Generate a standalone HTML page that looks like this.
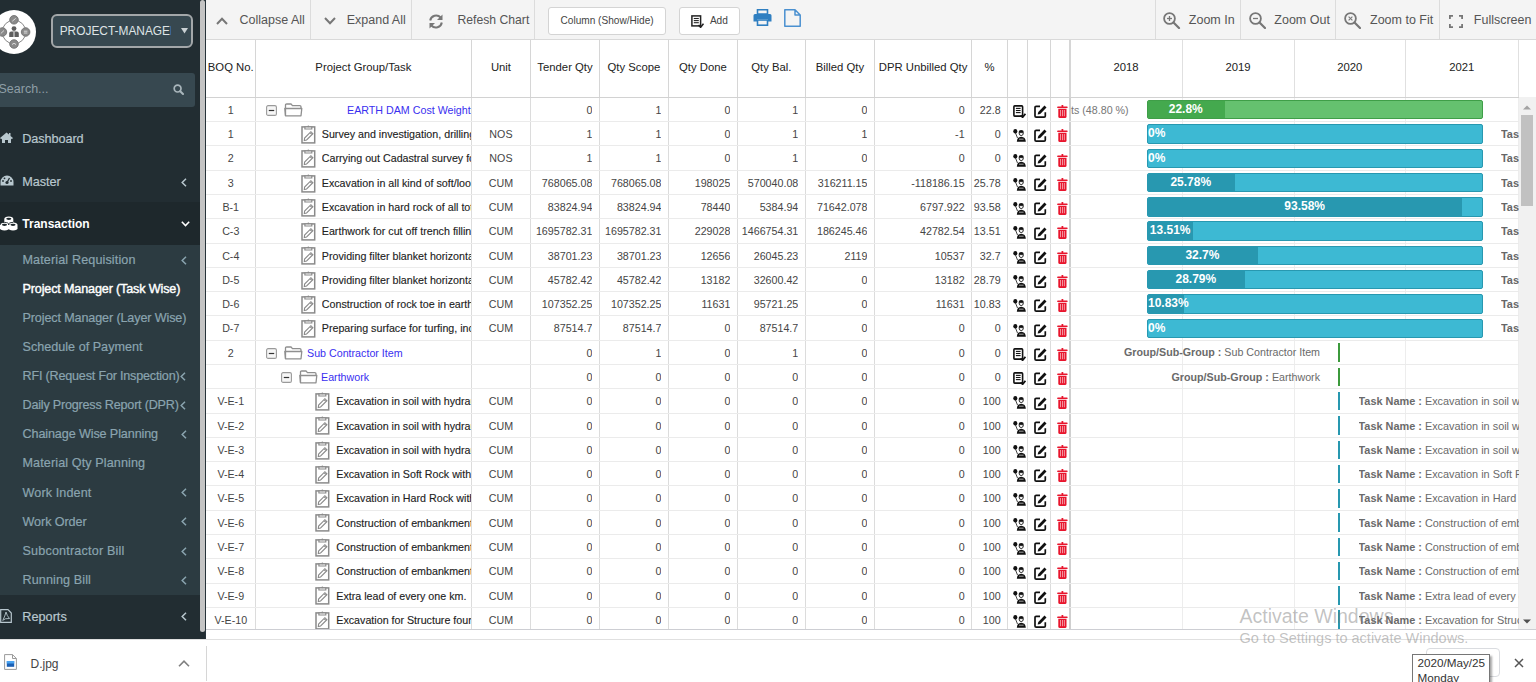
<!DOCTYPE html>
<html><head><meta charset="utf-8"><title>Project Manager</title>
<style>
html,body{margin:0;padding:0;width:1536px;height:682px;overflow:hidden;background:#fff;position:relative;font-family:'Liberation Sans',sans-serif;}
</style></head><body>
<div style="position:absolute;left:0px;top:0px;width:206px;height:639px;background:#222d32;overflow:hidden;"></div><svg style="position:absolute;left:-8px;top:9.7px" width="44" height="44" viewBox="0 0 44 44">
<circle cx="22" cy="22" r="22" fill="#fff"/>
<circle cx="22" cy="22" r="11.8" fill="none" stroke="#7a7a7a" stroke-width="0.9"/>
<g fill="#8a8a8a" stroke="#6a6a6a" stroke-width="0.8">
<circle cx="22" cy="9.8" r="4.3"/><circle cx="22" cy="34" r="4.3"/><circle cx="10.4" cy="22" r="4.3"/><circle cx="33.6" cy="22" r="4.3"/></g>
<g stroke="#f0f0f0" stroke-width="0.8" fill="none">
<path d="M20.3 11.2 L23.7 8.4"/><path d="M8.8 23.5 L12 20.5"/><path d="M31.8 21.2 H35.4 M31.8 23 H35.4"/><path d="M20 34.5 Q22 32 24 34.5"/></g>
<circle cx="22" cy="18.6" r="2.4" fill="#5e5e5e"/>
<path d="M17.2 27 V23.6 Q17.2 21.6 19.2 21.6 H24.8 Q26.8 21.6 26.8 23.6 V27 Z" fill="#5e5e5e"/>
<line x1="22" y1="21.8" x2="22" y2="27" stroke="#fff" stroke-width="0.9"/>
</svg><div style="position:absolute;left:50.5px;top:13.9px;width:142.5px;height:34px;box-sizing:border-box;border:2px solid #a3a7a9;border-radius:6px;background:#374850;overflow:hidden;"><div style="position:absolute;left:7.2px;top:8.0px;white-space:pre;font-family:'Liberation Sans',sans-serif;font-size:11.9px;color:#dfe4e6;width:111.5px;overflow:hidden;">PROJECT-MANAGEMENT</div></div><svg style="position:absolute;left:180.5px;top:28px" width="7" height="6"><path d="M0 0 L7 0 L3.5 5.5 Z" fill="#c9d0d3"/></svg><div style="position:absolute;left:0px;top:72.5px;width:195px;height:34.5px;background:#374850;border-radius:0 3px 3px 0;"><div style="position:absolute;left:-1.5px;top:9.5px;white-space:pre;font-family:'Liberation Sans',sans-serif;font-size:12.5px;color:#8e9ea6;">Search...</div></div><svg style="position:absolute;left:173px;top:84px" width="11" height="11" viewBox="0 0 11 11">
<circle cx="4.6" cy="4.6" r="3.4" fill="none" stroke="#a9b6bc" stroke-width="1.7"/>
<line x1="7.2" y1="7.2" x2="10" y2="10" stroke="#a9b6bc" stroke-width="2" stroke-linecap="round"/></svg><svg style="position:absolute;left:0px;top:132px" width="13" height="11" viewBox="0 0 13 11">
<path d="M6.5 0.5 L0 6 L1.2 7.2 L2 6.5 V11 H5 V8 H8 V11 H11 V6.5 L11.8 7.2 L13 6 L10.5 3.9 V1 H9 V2.6 Z" fill="#b8c7ce"/></svg><div style="position:absolute;left:22.3px;top:131.8px;white-space:pre;font-family:'Liberation Sans',sans-serif;font-size:12.7px;color:#b8c7ce;-webkit-text-stroke:0.2px #b8c7ce;letter-spacing:-0.09px;">Dashboard</div><svg style="position:absolute;left:0px;top:175px" width="14" height="11" viewBox="0 0 14 11">
<path d="M7 0.5 A6.5 6.5 0 0 0 0.5 7 V10.5 H13.5 V7 A6.5 6.5 0 0 0 7 0.5 Z" fill="#b8c7ce"/>
<circle cx="7" cy="7.5" r="1.6" fill="#222d32"/><line x1="7" y1="7.5" x2="9.5" y2="3" stroke="#222d32" stroke-width="1.3"/>
<circle cx="3" cy="6" r="0.9" fill="#222d32"/><circle cx="4.5" cy="3.3" r="0.9" fill="#222d32"/><circle cx="11" cy="6" r="0.9" fill="#222d32"/></svg><div style="position:absolute;left:22.3px;top:174.5px;white-space:pre;font-family:'Liberation Sans',sans-serif;font-size:12.7px;color:#b8c7ce;-webkit-text-stroke:0.2px #b8c7ce;letter-spacing:-0.07px;">Master</div><svg style="position:absolute;left:181px;top:177.5px" width="6" height="9" viewBox="0 0 6 9"><path d="M5 0.8 L1.2 4.5 L5 8.2" fill="none" stroke="#b8c7ce" stroke-width="1.5"/></svg><div style="position:absolute;left:0px;top:202px;width:200px;height:43px;background:#1e282c;"></div><svg style="position:absolute;left:0px;top:216px" width="18" height="15" viewBox="0 0 18 15">
<g fill="#fff">
<path d="M4.3 3 Q4.3 0.4 8.8 0.4 Q13.3 0.4 13.3 3 V6.5 Q13.3 8.6 8.8 8.6 Q4.3 8.6 4.3 6.5 Z"/>
<path d="M0 9 Q0 6.4 4.5 6.4 Q9 6.4 9 9 V12.3 Q9 14.4 4.5 14.4 Q0 14.4 0 12.3 Z"/>
<path d="M8.5 9 Q8.5 6.4 13 6.4 Q17.5 6.4 17.5 9 V12.3 Q17.5 14.4 13 14.4 Q8.5 14.4 8.5 12.3 Z"/></g>
<g fill="#1e282c"><ellipse cx="8.8" cy="2.8" rx="2.6" ry="1.1"/><ellipse cx="4.5" cy="8.8" rx="2.6" ry="1.1"/><ellipse cx="13" cy="8.8" rx="2.6" ry="1.1"/></g>
<g stroke="#1e282c" stroke-width="0.9" fill="none"><path d="M0 9 Q0 6.4 4.5 6.4 Q9 6.4 9 9"/><path d="M8.5 9 Q8.5 6.4 13 6.4"/></g>
</svg><div style="position:absolute;left:22.3px;top:216.8px;white-space:pre;font-family:'Liberation Sans',sans-serif;font-size:12px;color:#fff;font-weight:bold;">Transaction</div><svg style="position:absolute;left:180.5px;top:220.5px" width="9" height="6" viewBox="0 0 9 6"><path d="M0.8 0.8 L4.5 4.6 L8.2 0.8" fill="none" stroke="#fff" stroke-width="1.5"/></svg><div style="position:absolute;left:0px;top:245px;width:200px;height:349.5px;background:#2c3b41;"></div><div style="position:absolute;left:22.5px;top:252.7px;white-space:pre;font-family:'Liberation Sans',sans-serif;font-size:12.6px;color:#8aa4af;-webkit-text-stroke:0.2px #8aa4af;letter-spacing:0.125px;">Material Requisition</div><svg style="position:absolute;left:180.5px;top:255.5px" width="6" height="9" viewBox="0 0 6 9"><path d="M5 0.8 L1.2 4.5 L5 8.2" fill="none" stroke="#8aa4af" stroke-width="1.5"/></svg><div style="position:absolute;left:22.5px;top:281.8px;white-space:pre;font-family:'Liberation Sans',sans-serif;font-size:12.6px;color:#fff;-webkit-text-stroke:0.4px #fff;letter-spacing:-0.147px;">Project Manager (Task Wise)</div><div style="position:absolute;left:22.5px;top:310.9px;white-space:pre;font-family:'Liberation Sans',sans-serif;font-size:12.6px;color:#8aa4af;-webkit-text-stroke:0.2px #8aa4af;letter-spacing:-0.124px;">Project Manager (Layer Wise)</div><div style="position:absolute;left:22.5px;top:340.0px;white-space:pre;font-family:'Liberation Sans',sans-serif;font-size:12.6px;color:#8aa4af;-webkit-text-stroke:0.2px #8aa4af;letter-spacing:0.015px;">Schedule of Payment</div><div style="position:absolute;left:22.5px;top:369.09999999999997px;white-space:pre;font-family:'Liberation Sans',sans-serif;font-size:12.6px;color:#8aa4af;-webkit-text-stroke:0.2px #8aa4af;letter-spacing:-0.193px;">RFI (Request For Inspection)</div><svg style="position:absolute;left:179.5px;top:371.9px" width="6" height="9" viewBox="0 0 6 9"><path d="M5 0.8 L1.2 4.5 L5 8.2" fill="none" stroke="#8aa4af" stroke-width="1.5"/></svg><div style="position:absolute;left:22.5px;top:398.2px;white-space:pre;font-family:'Liberation Sans',sans-serif;font-size:12.6px;color:#8aa4af;-webkit-text-stroke:0.2px #8aa4af;letter-spacing:-0.203px;">Daily Progress Report (DPR)</div><svg style="position:absolute;left:179.5px;top:401.0px" width="6" height="9" viewBox="0 0 6 9"><path d="M5 0.8 L1.2 4.5 L5 8.2" fill="none" stroke="#8aa4af" stroke-width="1.5"/></svg><div style="position:absolute;left:22.5px;top:427.3px;white-space:pre;font-family:'Liberation Sans',sans-serif;font-size:12.6px;color:#8aa4af;-webkit-text-stroke:0.2px #8aa4af;letter-spacing:-0.110px;">Chainage Wise Planning</div><svg style="position:absolute;left:180.5px;top:430.1px" width="6" height="9" viewBox="0 0 6 9"><path d="M5 0.8 L1.2 4.5 L5 8.2" fill="none" stroke="#8aa4af" stroke-width="1.5"/></svg><div style="position:absolute;left:22.5px;top:456.40000000000003px;white-space:pre;font-family:'Liberation Sans',sans-serif;font-size:12.6px;color:#8aa4af;-webkit-text-stroke:0.2px #8aa4af;letter-spacing:0.109px;">Material Qty Planning</div><div style="position:absolute;left:22.5px;top:485.5px;white-space:pre;font-family:'Liberation Sans',sans-serif;font-size:12.6px;color:#8aa4af;-webkit-text-stroke:0.2px #8aa4af;letter-spacing:0.112px;">Work Indent</div><svg style="position:absolute;left:180.5px;top:488.3px" width="6" height="9" viewBox="0 0 6 9"><path d="M5 0.8 L1.2 4.5 L5 8.2" fill="none" stroke="#8aa4af" stroke-width="1.5"/></svg><div style="position:absolute;left:22.5px;top:514.6000000000001px;white-space:pre;font-family:'Liberation Sans',sans-serif;font-size:12.6px;color:#8aa4af;-webkit-text-stroke:0.2px #8aa4af;letter-spacing:-0.076px;">Work Order</div><svg style="position:absolute;left:180.5px;top:517.4000000000001px" width="6" height="9" viewBox="0 0 6 9"><path d="M5 0.8 L1.2 4.5 L5 8.2" fill="none" stroke="#8aa4af" stroke-width="1.5"/></svg><div style="position:absolute;left:22.5px;top:543.7px;white-space:pre;font-family:'Liberation Sans',sans-serif;font-size:12.6px;color:#8aa4af;-webkit-text-stroke:0.2px #8aa4af;letter-spacing:0.183px;">Subcontractor Bill</div><svg style="position:absolute;left:180.5px;top:546.5px" width="6" height="9" viewBox="0 0 6 9"><path d="M5 0.8 L1.2 4.5 L5 8.2" fill="none" stroke="#8aa4af" stroke-width="1.5"/></svg><div style="position:absolute;left:22.5px;top:572.8000000000001px;white-space:pre;font-family:'Liberation Sans',sans-serif;font-size:12.6px;color:#8aa4af;-webkit-text-stroke:0.2px #8aa4af;letter-spacing:0.107px;">Running Bill</div><svg style="position:absolute;left:180.5px;top:575.6px" width="6" height="9" viewBox="0 0 6 9"><path d="M5 0.8 L1.2 4.5 L5 8.2" fill="none" stroke="#8aa4af" stroke-width="1.5"/></svg><svg style="position:absolute;left:0px;top:609px" width="12" height="14" viewBox="0 0 12 14">
<path d="M0.7 0.7 H8 L11.3 4 V13.3 H0.7 Z" fill="none" stroke="#b8c7ce" stroke-width="1.2"/>
<path d="M3 11 Q5 7 6 3 Q7 7 9.5 9.5 Q5 9 2.5 11.5" fill="none" stroke="#b8c7ce" stroke-width="0.9"/></svg><div style="position:absolute;left:22.3px;top:609.6px;white-space:pre;font-family:'Liberation Sans',sans-serif;font-size:12.7px;color:#b8c7ce;-webkit-text-stroke:0.2px #b8c7ce;">Reports</div><svg style="position:absolute;left:181px;top:612px" width="6" height="9" viewBox="0 0 6 9"><path d="M5 0.8 L1.2 4.5 L5 8.2" fill="none" stroke="#b8c7ce" stroke-width="1.5"/></svg><div style="position:absolute;left:199.5px;top:0px;width:5.5px;height:631.5px;background:#c4c4c4;border-radius:3px;"></div><div style="position:absolute;left:205px;top:0px;width:1.2px;height:639px;background:#27333a;"></div><div style="position:absolute;left:206.2px;top:0px;width:1329.8px;height:39.3px;background:#f4f4f4;"></div><div style="position:absolute;left:206.2px;top:39.3px;width:1329.8px;height:1px;background:#d9d9d9;"></div><div style="position:absolute;left:310.0px;top:0px;width:1px;height:39.3px;background:#dcdcdc;"></div><div style="position:absolute;left:411.0px;top:0px;width:1px;height:39.3px;background:#dcdcdc;"></div><div style="position:absolute;left:534.0px;top:0px;width:1px;height:39.3px;background:#dcdcdc;"></div><div style="position:absolute;left:1154.5px;top:0px;width:1px;height:39.3px;background:#dcdcdc;"></div><div style="position:absolute;left:1240.0px;top:0px;width:1px;height:39.3px;background:#dcdcdc;"></div><div style="position:absolute;left:1334.7px;top:0px;width:1px;height:39.3px;background:#dcdcdc;"></div><div style="position:absolute;left:1439.0px;top:0px;width:1px;height:39.3px;background:#dcdcdc;"></div><svg style="position:absolute;left:216px;top:16.8px" width="12" height="8" viewBox="0 0 12 8"><path d="M1 7 L6 1.8 L11 7" fill="none" stroke="#777" stroke-width="2"/></svg><div style="position:absolute;left:239.5px;top:12.8px;white-space:pre;font-family:'Liberation Sans',sans-serif;font-size:12.5px;color:#555;">Collapse All</div><svg style="position:absolute;left:323.7px;top:17.3px" width="12" height="8" viewBox="0 0 12 8"><path d="M1 1 L6 6.2 L11 1" fill="none" stroke="#777" stroke-width="2"/></svg><div style="position:absolute;left:346.7px;top:12.8px;white-space:pre;font-family:'Liberation Sans',sans-serif;font-size:12.5px;color:#555;">Expand All</div><svg style="position:absolute;left:428px;top:13.5px" width="16" height="15" viewBox="0 0 16 15">
<path d="M2.2 6.5 A6 6 0 0 1 12.6 3.5" fill="none" stroke="#777" stroke-width="2"/><path d="M14.5 0.5 V6 H9 Z" fill="#777"/>
<path d="M13.8 8.5 A6 6 0 0 1 3.4 11.5" fill="none" stroke="#777" stroke-width="2"/><path d="M1.5 14.5 V9 H7 Z" fill="#777"/></svg><div style="position:absolute;left:457.5px;top:12.8px;white-space:pre;font-family:'Liberation Sans',sans-serif;font-size:12.5px;color:#555;font-size:12.2px;">Refesh Chart</div><div style="position:absolute;left:548px;top:7.2px;width:117.6px;height:27.6px;box-sizing:border-box;background:#fff;border:1px solid #d4d4d4;border-radius:3px;"><div style="position:absolute;left:11.5px;top:6.8px;white-space:pre;font-family:'Liberation Sans',sans-serif;font-size:10.1px;color:#444;">Column (Show/Hide)</div></div><div style="position:absolute;left:679.4px;top:7.2px;width:60.2px;height:27.6px;box-sizing:border-box;background:#fff;border:1px solid #d4d4d4;border-radius:3px;"><div style="position:absolute;left:29.5px;top:6.8px;white-space:pre;font-family:'Liberation Sans',sans-serif;font-size:10.1px;color:#444;">Add</div></div><svg style="position:absolute;left:691px;top:14.5px" width="13" height="13" viewBox="0 0 13 13">
<rect x="0.9" y="0.9" width="8.7" height="10" fill="none" stroke="#222" stroke-width="1.5"/>
<line x1="2.8" y1="3.5" x2="7.8" y2="3.5" stroke="#222" stroke-width="1.1"/><line x1="2.8" y1="5.6" x2="7.8" y2="5.6" stroke="#222" stroke-width="1.1"/><line x1="2.8" y1="7.7" x2="7.8" y2="7.7" stroke="#222" stroke-width="1.1"/>
<path d="M7.5 10 L9.6 12.3 L12.5 8.7" fill="none" stroke="#222" stroke-width="1.6"/></svg><svg style="position:absolute;left:752.8px;top:9px" width="19" height="17" viewBox="0 0 19 17">
<path d="M4.5 0.8 H14.5 V5 H4.5 Z" fill="none" stroke="#2f7fc1" stroke-width="1.6"/>
<path d="M2 5 H17 Q18.5 5 18.5 6.5 V12.5 H15 V10 H4 V12.5 H0.5 V6.5 Q0.5 5 2 5 Z" fill="#2f7fc1"/>
<rect x="4.5" y="11" width="10" height="5.2" fill="none" stroke="#2f7fc1" stroke-width="1.6"/></svg><svg style="position:absolute;left:784px;top:9px" width="17" height="18" viewBox="0 0 17 18">
<path d="M0.8 0.8 H11 L16.2 6 V17.2 H0.8 Z M11 0.8 V6 H16.2" fill="none" stroke="#4a90d0" stroke-width="1.5" stroke-linejoin="round"/></svg><svg style="position:absolute;left:1163px;top:12.2px" width="17.5" height="17" viewBox="0 0 17.5 17">
<circle cx="6.5" cy="6.5" r="5.4" fill="none" stroke="#777" stroke-width="1.8"/><line x1="4" y1="6.5" x2="9" y2="6.5" stroke="#777" stroke-width="1.3"/><line x1="6.5" y1="4" x2="6.5" y2="9" stroke="#777" stroke-width="1.3"/>
<line x1="10.5" y1="10.5" x2="16" y2="16" stroke="#777" stroke-width="2.2" stroke-linecap="round"/></svg><div style="position:absolute;left:1188.8px;top:12.8px;white-space:pre;font-family:'Liberation Sans',sans-serif;font-size:12.5px;color:#555;">Zoom In</div><svg style="position:absolute;left:1248.5px;top:12.2px" width="17.5" height="17" viewBox="0 0 17.5 17">
<circle cx="6.5" cy="6.5" r="5.4" fill="none" stroke="#777" stroke-width="1.8"/><line x1="4" y1="6.5" x2="9" y2="6.5" stroke="#777" stroke-width="1.3"/>
<line x1="10.5" y1="10.5" x2="16" y2="16" stroke="#777" stroke-width="2.2" stroke-linecap="round"/></svg><div style="position:absolute;left:1274.3px;top:12.8px;white-space:pre;font-family:'Liberation Sans',sans-serif;font-size:12.5px;color:#555;">Zoom Out</div><svg style="position:absolute;left:1343.6px;top:12.2px" width="17.5" height="17" viewBox="0 0 17.5 17">
<circle cx="6.5" cy="6.5" r="5.4" fill="none" stroke="#777" stroke-width="1.8"/><line x1="4.6" y1="4.6" x2="8.4" y2="8.4" stroke="#777" stroke-width="1.1"/><line x1="8.4" y1="4.6" x2="4.6" y2="8.4" stroke="#777" stroke-width="1.1"/>
<line x1="10.5" y1="10.5" x2="16" y2="16" stroke="#777" stroke-width="2.2" stroke-linecap="round"/></svg><div style="position:absolute;left:1370px;top:12.8px;white-space:pre;font-family:'Liberation Sans',sans-serif;font-size:12.5px;color:#555;">Zoom to Fit</div><svg style="position:absolute;left:1449.3px;top:14.8px" width="14" height="13" viewBox="0 0 14 13">
<path d="M0.9 4 V0.9 H4 M10 0.9 H13.1 V4 M13.1 9 V12.1 H10 M4 12.1 H0.9 V9" fill="none" stroke="#777" stroke-width="1.8"/></svg><div style="position:absolute;left:1473.8px;top:12.8px;white-space:pre;font-family:'Liberation Sans',sans-serif;font-size:12.5px;color:#555;">Fullscreen</div><div style="position:absolute;left:206.2px;top:40.3px;width:1313px;height:57.1px;background:#fff;"></div><div style="position:absolute;left:206px;top:61.1px;white-space:pre;font-family:'Liberation Sans',sans-serif;font-size:11.3px;color:#222;width:49.5px;overflow:hidden;text-align:center;">BOQ No.</div><div style="position:absolute;left:255.5px;top:61.1px;white-space:pre;font-family:'Liberation Sans',sans-serif;font-size:11.3px;color:#222;width:215.8px;overflow:hidden;text-align:center;">Project Group/Task</div><div style="position:absolute;left:471.3px;top:61.1px;white-space:pre;font-family:'Liberation Sans',sans-serif;font-size:11.3px;color:#222;width:59.30000000000001px;overflow:hidden;text-align:center;">Unit</div><div style="position:absolute;left:530.6px;top:61.1px;white-space:pre;font-family:'Liberation Sans',sans-serif;font-size:11.3px;color:#222;width:68.79999999999995px;overflow:hidden;text-align:center;">Tender Qty</div><div style="position:absolute;left:599.4px;top:61.1px;white-space:pre;font-family:'Liberation Sans',sans-serif;font-size:11.3px;color:#222;width:69.10000000000002px;overflow:hidden;text-align:center;">Qty Scope</div><div style="position:absolute;left:668.5px;top:61.1px;white-space:pre;font-family:'Liberation Sans',sans-serif;font-size:11.3px;color:#222;width:68.89999999999998px;overflow:hidden;text-align:center;">Qty Done</div><div style="position:absolute;left:737.4px;top:61.1px;white-space:pre;font-family:'Liberation Sans',sans-serif;font-size:11.3px;color:#222;width:67.89999999999998px;overflow:hidden;text-align:center;">Qty Bal.</div><div style="position:absolute;left:805.3px;top:61.1px;white-space:pre;font-family:'Liberation Sans',sans-serif;font-size:11.3px;color:#222;width:69.20000000000005px;overflow:hidden;text-align:center;">Billed Qty</div><div style="position:absolute;left:874.5px;top:61.1px;white-space:pre;font-family:'Liberation Sans',sans-serif;font-size:11.3px;color:#222;width:97.10000000000002px;overflow:hidden;text-align:center;">DPR Unbilled Qty</div><div style="position:absolute;left:971.6px;top:61.1px;white-space:pre;font-family:'Liberation Sans',sans-serif;font-size:11.3px;color:#222;width:36.0px;overflow:hidden;text-align:center;">%</div><div style="position:absolute;left:255.0px;top:40.3px;width:1px;height:57.1px;background:#d6d6d6;"></div><div style="position:absolute;left:470.8px;top:40.3px;width:1px;height:57.1px;background:#d6d6d6;"></div><div style="position:absolute;left:530.1px;top:40.3px;width:1px;height:57.1px;background:#d6d6d6;"></div><div style="position:absolute;left:598.9px;top:40.3px;width:1px;height:57.1px;background:#d6d6d6;"></div><div style="position:absolute;left:668.0px;top:40.3px;width:1px;height:57.1px;background:#d6d6d6;"></div><div style="position:absolute;left:736.9px;top:40.3px;width:1px;height:57.1px;background:#d6d6d6;"></div><div style="position:absolute;left:804.8px;top:40.3px;width:1px;height:57.1px;background:#d6d6d6;"></div><div style="position:absolute;left:874.0px;top:40.3px;width:1px;height:57.1px;background:#d6d6d6;"></div><div style="position:absolute;left:971.1px;top:40.3px;width:1px;height:57.1px;background:#d6d6d6;"></div><div style="position:absolute;left:1007.1px;top:40.3px;width:1px;height:57.1px;background:#d6d6d6;"></div><div style="position:absolute;left:1027.1px;top:40.3px;width:1px;height:57.1px;background:#d6d6d6;"></div><div style="position:absolute;left:1049.6px;top:40.3px;width:1px;height:57.1px;background:#d6d6d6;"></div><div style="position:absolute;left:1069px;top:40.3px;width:2px;height:57.1px;background:#d6d6d6;"></div><div style="position:absolute;left:1070px;top:61.1px;white-space:pre;font-family:'Liberation Sans',sans-serif;font-size:11.3px;color:#222;width:112.20000000000005px;overflow:hidden;text-align:center;">2018</div><div style="position:absolute;left:1181.7px;top:40.3px;width:1px;height:57.1px;background:#e0e0e0;"></div><div style="position:absolute;left:1182.2px;top:61.1px;white-space:pre;font-family:'Liberation Sans',sans-serif;font-size:11.3px;color:#222;width:111.79999999999995px;overflow:hidden;text-align:center;">2019</div><div style="position:absolute;left:1293.5px;top:40.3px;width:1px;height:57.1px;background:#e0e0e0;"></div><div style="position:absolute;left:1294px;top:61.1px;white-space:pre;font-family:'Liberation Sans',sans-serif;font-size:11.3px;color:#222;width:111.70000000000005px;overflow:hidden;text-align:center;">2020</div><div style="position:absolute;left:1405.2px;top:40.3px;width:1px;height:57.1px;background:#e0e0e0;"></div><div style="position:absolute;left:1405.7px;top:61.1px;white-space:pre;font-family:'Liberation Sans',sans-serif;font-size:11.3px;color:#222;width:112.29999999999995px;overflow:hidden;text-align:center;">2021</div><div style="position:absolute;left:1517.5px;top:40.3px;width:1px;height:57.1px;background:#e0e0e0;"></div><div style="position:absolute;left:206.2px;top:97.4px;width:1329.8px;height:531.6px;background:#fff;overflow:hidden;"></div><div style="position:absolute;left:255.0px;top:97.4px;width:1px;height:531.6px;background:#dcdcdc;"></div><div style="position:absolute;left:470.8px;top:97.4px;width:1px;height:531.6px;background:#dcdcdc;"></div><div style="position:absolute;left:530.1px;top:97.4px;width:1px;height:531.6px;background:#dcdcdc;"></div><div style="position:absolute;left:598.9px;top:97.4px;width:1px;height:531.6px;background:#dcdcdc;"></div><div style="position:absolute;left:668.0px;top:97.4px;width:1px;height:531.6px;background:#dcdcdc;"></div><div style="position:absolute;left:736.9px;top:97.4px;width:1px;height:531.6px;background:#dcdcdc;"></div><div style="position:absolute;left:804.8px;top:97.4px;width:1px;height:531.6px;background:#dcdcdc;"></div><div style="position:absolute;left:874.0px;top:97.4px;width:1px;height:531.6px;background:#dcdcdc;"></div><div style="position:absolute;left:971.1px;top:97.4px;width:1px;height:531.6px;background:#dcdcdc;"></div><div style="position:absolute;left:1007.1px;top:97.4px;width:1px;height:531.6px;background:#dcdcdc;"></div><div style="position:absolute;left:1027.1px;top:97.4px;width:1px;height:531.6px;background:#dcdcdc;"></div><div style="position:absolute;left:1049.6px;top:97.4px;width:1px;height:531.6px;background:#dcdcdc;"></div><div style="position:absolute;left:1069px;top:97.4px;width:2px;height:531.6px;background:#cfcfcf;"></div><div style="position:absolute;left:1181.7px;top:97.4px;width:1px;height:531.6px;background:#ededed;"></div><div style="position:absolute;left:1293.5px;top:97.4px;width:1px;height:531.6px;background:#ededed;"></div><div style="position:absolute;left:1405.2px;top:97.4px;width:1px;height:531.6px;background:#ededed;"></div><div style="position:absolute;left:1517.5px;top:97.4px;width:1px;height:531.6px;background:#ededed;"></div><div style="position:absolute;left:0;top:0;width:1536px;height:629px;overflow:hidden;"><div style="position:absolute;left:206px;top:103.9px;white-space:pre;font-family:'Liberation Sans',sans-serif;font-size:10.7px;color:#454545;width:49.5px;overflow:hidden;text-align:center;">1</div><svg style="position:absolute;left:266px;top:104.9px" width="11" height="11" viewBox="0 0 11 11">
<rect x="0.6" y="0.6" width="9.8" height="9.8" rx="1.5" fill="#f6f6f6" stroke="#9a9a9a" stroke-width="1.1"/>
<line x1="2.8" y1="5.5" x2="8.2" y2="5.5" stroke="#333" stroke-width="1.2"/></svg><svg style="position:absolute;left:283.5px;top:103.1px" width="19" height="14" viewBox="0 0 19 14">
<path d="M1.5 12.8 V2.2 Q1.5 1 2.7 1 H7 L8.5 2.6 H15.8 Q17 2.6 17 3.8 V5.5" fill="none" stroke="#8f8f8f" stroke-width="1.3"/>
<path d="M1.5 12.8 L0.8 5.5 H17.8 L17 12.8 Z" fill="none" stroke="#8f8f8f" stroke-width="1.3" stroke-linejoin="round"/></svg><div style="position:absolute;left:347px;top:103.9px;white-space:pre;font-family:'Liberation Sans',sans-serif;font-size:10.7px;color:#3a2ff0;width:124.30000000000001px;overflow:hidden;">EARTH DAM Cost Weight</div><div style="position:absolute;left:530.6px;top:103.9px;white-space:pre;font-family:'Liberation Sans',sans-serif;font-size:10.7px;color:#454545;width:61.799999999999955px;overflow:hidden;text-align:right;">0</div><div style="position:absolute;left:599.4px;top:103.9px;white-space:pre;font-family:'Liberation Sans',sans-serif;font-size:10.7px;color:#454545;width:62.10000000000002px;overflow:hidden;text-align:right;">1</div><div style="position:absolute;left:668.5px;top:103.9px;white-space:pre;font-family:'Liberation Sans',sans-serif;font-size:10.7px;color:#454545;width:61.89999999999998px;overflow:hidden;text-align:right;">0</div><div style="position:absolute;left:737.4px;top:103.9px;white-space:pre;font-family:'Liberation Sans',sans-serif;font-size:10.7px;color:#454545;width:60.89999999999998px;overflow:hidden;text-align:right;">1</div><div style="position:absolute;left:805.3px;top:103.9px;white-space:pre;font-family:'Liberation Sans',sans-serif;font-size:10.7px;color:#454545;width:62.200000000000045px;overflow:hidden;text-align:right;">0</div><div style="position:absolute;left:874.5px;top:103.9px;white-space:pre;font-family:'Liberation Sans',sans-serif;font-size:10.7px;color:#454545;width:90.10000000000002px;overflow:hidden;text-align:right;">0</div><div style="position:absolute;left:971.6px;top:103.9px;white-space:pre;font-family:'Liberation Sans',sans-serif;font-size:10.7px;color:#454545;width:29.0px;overflow:hidden;text-align:right;">22.8</div><svg style="position:absolute;left:1013.0px;top:105.0px" width="13" height="13" viewBox="0 0 13 13">
<rect x="0.9" y="0.9" width="8.7" height="10.2" rx="0.8" fill="none" stroke="#111" stroke-width="1.6"/>
<line x1="2.9" y1="3.4" x2="7.6" y2="3.4" stroke="#111" stroke-width="1.1"/><line x1="2.9" y1="5.5" x2="7.6" y2="5.5" stroke="#111" stroke-width="1.1"/><line x1="2.9" y1="7.6" x2="7.6" y2="7.6" stroke="#111" stroke-width="1.1"/>
<path d="M7.6 10.4 L9.6 12.3 L12.4 8.8" fill="none" stroke="#111" stroke-width="1.7"/></svg><svg style="position:absolute;left:1034px;top:105.2px" width="13" height="13" viewBox="0 0 13 13">
<path d="M6 1.4 H2.2 Q1 1.4 1 2.6 V10.9 Q1 12.1 2.2 12.1 H10.1 Q11.3 12.1 11.3 10.9 V7.3" fill="none" stroke="#111" stroke-width="1.7"/>
<path d="M10.5 0.6 L12.5 2.6 L6.2 8.9 L3.6 9.6 L4.3 7 Z" fill="#111"/></svg><svg style="position:absolute;left:1056.5px;top:105.0px" width="11" height="13" viewBox="0 0 11 13">
<rect x="4.5" y="0" width="1.8" height="2" rx="0.5" fill="#e8152d"/>
<rect x="0.2" y="1.6" width="10.4" height="1.5" rx="0.6" fill="#e8152d"/>
<path d="M1.3 3.7 H9.5 V11.4 Q9.5 12.9 8 12.9 H2.8 Q1.3 12.9 1.3 11.4 Z" fill="#e8152d"/>
<rect x="3.1" y="5" width="0.8" height="6.2" fill="#f5b4bb"/><rect x="5" y="5" width="0.8" height="6.2" fill="#f5b4bb"/><rect x="6.9" y="5" width="0.8" height="6.2" fill="#f5b4bb"/></svg><div style="position:absolute;left:206.2px;top:121.18px;width:1313px;height:1px;background:#ebebeb;"></div><div style="position:absolute;left:1147px;top:100.0px;width:335.9px;height:19.4px;box-sizing:border-box;background:#65c16f;border:1px solid #3f9e48;border-radius:2px;overflow:hidden;"><div style="position:absolute;left:0px;top:0px;width:76.6px;height:18px;background:#44a94e;"></div></div><div style="position:absolute;left:1148px;top:100.0px;width:75.5852px;height:19.4px;line-height:18px;text-align:center;white-space:pre;font-family:'Liberation Sans',sans-serif;font-size:12px;font-weight:bold;color:#fff;">22.8%</div><div style="position:absolute;left:1071px;top:103.9px;white-space:pre;font-family:'Liberation Sans',sans-serif;font-size:10.7px;color:#777;">ts (48.80 %)</div><div style="position:absolute;left:206px;top:128.18px;white-space:pre;font-family:'Liberation Sans',sans-serif;font-size:10.7px;color:#454545;width:49.5px;overflow:hidden;text-align:center;">1</div><svg style="position:absolute;left:300.5px;top:124.98px" width="15" height="19" viewBox="0 0 15 19">
<rect x="1" y="1.9" width="12.7" height="16" fill="none" stroke="#8a8a8a" stroke-width="1.5"/>
<path d="M3.9 1.9 V4 H10.8 V1.9 Z" fill="#fff" stroke="#8a8a8a" stroke-width="1.2"/>
<circle cx="7.35" cy="1.3" r="0.9" fill="#8a8a8a"/>
<path d="M3.3 15.5 L3.6 13 L9.9 6.7 L11.9 8.7 L5.6 15 Z M9 7.6 L11 9.6" fill="none" stroke="#8a8a8a" stroke-width="1.1"/></svg><div style="position:absolute;left:321.8px;top:128.18px;white-space:pre;font-family:'Liberation Sans',sans-serif;font-size:10.7px;color:#454545;color:#222;-webkit-text-stroke:0.12px #222;width:149.5px;overflow:hidden;">Survey and investigation, drilling</div><div style="position:absolute;left:471.3px;top:128.18px;white-space:pre;font-family:'Liberation Sans',sans-serif;font-size:10.7px;color:#454545;width:59.30000000000001px;overflow:hidden;text-align:center;">NOS</div><div style="position:absolute;left:530.6px;top:128.18px;white-space:pre;font-family:'Liberation Sans',sans-serif;font-size:10.7px;color:#454545;width:61.799999999999955px;overflow:hidden;text-align:right;">1</div><div style="position:absolute;left:599.4px;top:128.18px;white-space:pre;font-family:'Liberation Sans',sans-serif;font-size:10.7px;color:#454545;width:62.10000000000002px;overflow:hidden;text-align:right;">1</div><div style="position:absolute;left:668.5px;top:128.18px;white-space:pre;font-family:'Liberation Sans',sans-serif;font-size:10.7px;color:#454545;width:61.89999999999998px;overflow:hidden;text-align:right;">0</div><div style="position:absolute;left:737.4px;top:128.18px;white-space:pre;font-family:'Liberation Sans',sans-serif;font-size:10.7px;color:#454545;width:60.89999999999998px;overflow:hidden;text-align:right;">1</div><div style="position:absolute;left:805.3px;top:128.18px;white-space:pre;font-family:'Liberation Sans',sans-serif;font-size:10.7px;color:#454545;width:62.200000000000045px;overflow:hidden;text-align:right;">1</div><div style="position:absolute;left:874.5px;top:128.18px;white-space:pre;font-family:'Liberation Sans',sans-serif;font-size:10.7px;color:#454545;width:90.10000000000002px;overflow:hidden;text-align:right;">-1</div><div style="position:absolute;left:971.6px;top:128.18px;white-space:pre;font-family:'Liberation Sans',sans-serif;font-size:10.7px;color:#454545;width:29.0px;overflow:hidden;text-align:right;">0</div><svg style="position:absolute;left:1013.0px;top:129.28px" width="13" height="13" viewBox="0 0 13 13">
<ellipse cx="2.3" cy="2.2" rx="2" ry="2.2" fill="#111"/><line x1="2.5" y1="4" x2="4.5" y2="9" stroke="#111" stroke-width="0.8"/>
<path d="M5.6 3.3 Q5.8 0.9 8.2 0.9 Q10.7 0.9 10.8 3.3 Z" fill="#111"/>
<path d="M6 3.6 H10.4 Q10.4 6.6 8.2 6.6 Q6 6.6 6 3.6 Z" fill="none" stroke="#111" stroke-width="0.9"/>
<path d="M3.8 12.8 Q4 8 8.2 7.8 Q12.6 8 12.8 12.8 Z" fill="#111"/>
<line x1="6" y1="10.2" x2="10.6" y2="10.2" stroke="#fff" stroke-width="0.6"/></svg><svg style="position:absolute;left:1034px;top:129.48px" width="13" height="13" viewBox="0 0 13 13">
<path d="M6 1.4 H2.2 Q1 1.4 1 2.6 V10.9 Q1 12.1 2.2 12.1 H10.1 Q11.3 12.1 11.3 10.9 V7.3" fill="none" stroke="#111" stroke-width="1.7"/>
<path d="M10.5 0.6 L12.5 2.6 L6.2 8.9 L3.6 9.6 L4.3 7 Z" fill="#111"/></svg><svg style="position:absolute;left:1056.5px;top:129.28px" width="11" height="13" viewBox="0 0 11 13">
<rect x="4.5" y="0" width="1.8" height="2" rx="0.5" fill="#e8152d"/>
<rect x="0.2" y="1.6" width="10.4" height="1.5" rx="0.6" fill="#e8152d"/>
<path d="M1.3 3.7 H9.5 V11.4 Q9.5 12.9 8 12.9 H2.8 Q1.3 12.9 1.3 11.4 Z" fill="#e8152d"/>
<rect x="3.1" y="5" width="0.8" height="6.2" fill="#f5b4bb"/><rect x="5" y="5" width="0.8" height="6.2" fill="#f5b4bb"/><rect x="6.9" y="5" width="0.8" height="6.2" fill="#f5b4bb"/></svg><div style="position:absolute;left:206.2px;top:145.46px;width:1313px;height:1px;background:#ebebeb;"></div><div style="position:absolute;left:1147px;top:124.28px;width:335.9px;height:19.4px;box-sizing:border-box;background:#3db9d3;border:1px solid #2898b0;border-radius:2px;overflow:hidden;"><div style="position:absolute;left:0px;top:0px;width:0.0px;height:18px;background:#2898b0;"></div></div><div style="position:absolute;left:1148px;top:124.28px;width:1px;height:19.4px;line-height:18px;text-align:center;white-space:pre;font-family:'Liberation Sans',sans-serif;font-size:12px;font-weight:bold;color:#fff;">0%</div><div style="position:absolute;left:1501px;top:128.18px;white-space:pre;font-family:'Liberation Sans',sans-serif;font-size:10.9px;color:#666;font-weight:bold;width:17.5px;overflow:hidden;">Task Name : ...</div><div style="position:absolute;left:206px;top:152.46px;white-space:pre;font-family:'Liberation Sans',sans-serif;font-size:10.7px;color:#454545;width:49.5px;overflow:hidden;text-align:center;">2</div><svg style="position:absolute;left:300.5px;top:149.26px" width="15" height="19" viewBox="0 0 15 19">
<rect x="1" y="1.9" width="12.7" height="16" fill="none" stroke="#8a8a8a" stroke-width="1.5"/>
<path d="M3.9 1.9 V4 H10.8 V1.9 Z" fill="#fff" stroke="#8a8a8a" stroke-width="1.2"/>
<circle cx="7.35" cy="1.3" r="0.9" fill="#8a8a8a"/>
<path d="M3.3 15.5 L3.6 13 L9.9 6.7 L11.9 8.7 L5.6 15 Z M9 7.6 L11 9.6" fill="none" stroke="#8a8a8a" stroke-width="1.1"/></svg><div style="position:absolute;left:321.8px;top:152.46px;white-space:pre;font-family:'Liberation Sans',sans-serif;font-size:10.7px;color:#454545;color:#222;-webkit-text-stroke:0.12px #222;width:149.5px;overflow:hidden;">Carrying out Cadastral survey for</div><div style="position:absolute;left:471.3px;top:152.46px;white-space:pre;font-family:'Liberation Sans',sans-serif;font-size:10.7px;color:#454545;width:59.30000000000001px;overflow:hidden;text-align:center;">NOS</div><div style="position:absolute;left:530.6px;top:152.46px;white-space:pre;font-family:'Liberation Sans',sans-serif;font-size:10.7px;color:#454545;width:61.799999999999955px;overflow:hidden;text-align:right;">1</div><div style="position:absolute;left:599.4px;top:152.46px;white-space:pre;font-family:'Liberation Sans',sans-serif;font-size:10.7px;color:#454545;width:62.10000000000002px;overflow:hidden;text-align:right;">1</div><div style="position:absolute;left:668.5px;top:152.46px;white-space:pre;font-family:'Liberation Sans',sans-serif;font-size:10.7px;color:#454545;width:61.89999999999998px;overflow:hidden;text-align:right;">0</div><div style="position:absolute;left:737.4px;top:152.46px;white-space:pre;font-family:'Liberation Sans',sans-serif;font-size:10.7px;color:#454545;width:60.89999999999998px;overflow:hidden;text-align:right;">1</div><div style="position:absolute;left:805.3px;top:152.46px;white-space:pre;font-family:'Liberation Sans',sans-serif;font-size:10.7px;color:#454545;width:62.200000000000045px;overflow:hidden;text-align:right;">0</div><div style="position:absolute;left:874.5px;top:152.46px;white-space:pre;font-family:'Liberation Sans',sans-serif;font-size:10.7px;color:#454545;width:90.10000000000002px;overflow:hidden;text-align:right;">0</div><div style="position:absolute;left:971.6px;top:152.46px;white-space:pre;font-family:'Liberation Sans',sans-serif;font-size:10.7px;color:#454545;width:29.0px;overflow:hidden;text-align:right;">0</div><svg style="position:absolute;left:1013.0px;top:153.56px" width="13" height="13" viewBox="0 0 13 13">
<ellipse cx="2.3" cy="2.2" rx="2" ry="2.2" fill="#111"/><line x1="2.5" y1="4" x2="4.5" y2="9" stroke="#111" stroke-width="0.8"/>
<path d="M5.6 3.3 Q5.8 0.9 8.2 0.9 Q10.7 0.9 10.8 3.3 Z" fill="#111"/>
<path d="M6 3.6 H10.4 Q10.4 6.6 8.2 6.6 Q6 6.6 6 3.6 Z" fill="none" stroke="#111" stroke-width="0.9"/>
<path d="M3.8 12.8 Q4 8 8.2 7.8 Q12.6 8 12.8 12.8 Z" fill="#111"/>
<line x1="6" y1="10.2" x2="10.6" y2="10.2" stroke="#fff" stroke-width="0.6"/></svg><svg style="position:absolute;left:1034px;top:153.76px" width="13" height="13" viewBox="0 0 13 13">
<path d="M6 1.4 H2.2 Q1 1.4 1 2.6 V10.9 Q1 12.1 2.2 12.1 H10.1 Q11.3 12.1 11.3 10.9 V7.3" fill="none" stroke="#111" stroke-width="1.7"/>
<path d="M10.5 0.6 L12.5 2.6 L6.2 8.9 L3.6 9.6 L4.3 7 Z" fill="#111"/></svg><svg style="position:absolute;left:1056.5px;top:153.56px" width="11" height="13" viewBox="0 0 11 13">
<rect x="4.5" y="0" width="1.8" height="2" rx="0.5" fill="#e8152d"/>
<rect x="0.2" y="1.6" width="10.4" height="1.5" rx="0.6" fill="#e8152d"/>
<path d="M1.3 3.7 H9.5 V11.4 Q9.5 12.9 8 12.9 H2.8 Q1.3 12.9 1.3 11.4 Z" fill="#e8152d"/>
<rect x="3.1" y="5" width="0.8" height="6.2" fill="#f5b4bb"/><rect x="5" y="5" width="0.8" height="6.2" fill="#f5b4bb"/><rect x="6.9" y="5" width="0.8" height="6.2" fill="#f5b4bb"/></svg><div style="position:absolute;left:206.2px;top:169.74px;width:1313px;height:1px;background:#ebebeb;"></div><div style="position:absolute;left:1147px;top:148.56px;width:335.9px;height:19.4px;box-sizing:border-box;background:#3db9d3;border:1px solid #2898b0;border-radius:2px;overflow:hidden;"><div style="position:absolute;left:0px;top:0px;width:0.0px;height:18px;background:#2898b0;"></div></div><div style="position:absolute;left:1148px;top:148.56px;width:1px;height:19.4px;line-height:18px;text-align:center;white-space:pre;font-family:'Liberation Sans',sans-serif;font-size:12px;font-weight:bold;color:#fff;">0%</div><div style="position:absolute;left:1501px;top:152.46px;white-space:pre;font-family:'Liberation Sans',sans-serif;font-size:10.9px;color:#666;font-weight:bold;width:17.5px;overflow:hidden;">Task Name : ...</div><div style="position:absolute;left:206px;top:176.74px;white-space:pre;font-family:'Liberation Sans',sans-serif;font-size:10.7px;color:#454545;width:49.5px;overflow:hidden;text-align:center;">3</div><svg style="position:absolute;left:300.5px;top:173.54px" width="15" height="19" viewBox="0 0 15 19">
<rect x="1" y="1.9" width="12.7" height="16" fill="none" stroke="#8a8a8a" stroke-width="1.5"/>
<path d="M3.9 1.9 V4 H10.8 V1.9 Z" fill="#fff" stroke="#8a8a8a" stroke-width="1.2"/>
<circle cx="7.35" cy="1.3" r="0.9" fill="#8a8a8a"/>
<path d="M3.3 15.5 L3.6 13 L9.9 6.7 L11.9 8.7 L5.6 15 Z M9 7.6 L11 9.6" fill="none" stroke="#8a8a8a" stroke-width="1.1"/></svg><div style="position:absolute;left:321.8px;top:176.74px;white-space:pre;font-family:'Liberation Sans',sans-serif;font-size:10.7px;color:#454545;color:#222;-webkit-text-stroke:0.12px #222;width:149.5px;overflow:hidden;">Excavation in all kind of soft/loose</div><div style="position:absolute;left:471.3px;top:176.74px;white-space:pre;font-family:'Liberation Sans',sans-serif;font-size:10.7px;color:#454545;width:59.30000000000001px;overflow:hidden;text-align:center;">CUM</div><div style="position:absolute;left:530.6px;top:176.74px;white-space:pre;font-family:'Liberation Sans',sans-serif;font-size:10.7px;color:#454545;width:61.799999999999955px;overflow:hidden;text-align:right;">768065.08</div><div style="position:absolute;left:599.4px;top:176.74px;white-space:pre;font-family:'Liberation Sans',sans-serif;font-size:10.7px;color:#454545;width:62.10000000000002px;overflow:hidden;text-align:right;">768065.08</div><div style="position:absolute;left:668.5px;top:176.74px;white-space:pre;font-family:'Liberation Sans',sans-serif;font-size:10.7px;color:#454545;width:61.89999999999998px;overflow:hidden;text-align:right;">198025</div><div style="position:absolute;left:737.4px;top:176.74px;white-space:pre;font-family:'Liberation Sans',sans-serif;font-size:10.7px;color:#454545;width:60.89999999999998px;overflow:hidden;text-align:right;">570040.08</div><div style="position:absolute;left:805.3px;top:176.74px;white-space:pre;font-family:'Liberation Sans',sans-serif;font-size:10.7px;color:#454545;width:62.200000000000045px;overflow:hidden;text-align:right;">316211.15</div><div style="position:absolute;left:874.5px;top:176.74px;white-space:pre;font-family:'Liberation Sans',sans-serif;font-size:10.7px;color:#454545;width:90.10000000000002px;overflow:hidden;text-align:right;">-118186.15</div><div style="position:absolute;left:971.6px;top:176.74px;white-space:pre;font-family:'Liberation Sans',sans-serif;font-size:10.7px;color:#454545;width:29.0px;overflow:hidden;text-align:right;">25.78</div><svg style="position:absolute;left:1013.0px;top:177.84px" width="13" height="13" viewBox="0 0 13 13">
<ellipse cx="2.3" cy="2.2" rx="2" ry="2.2" fill="#111"/><line x1="2.5" y1="4" x2="4.5" y2="9" stroke="#111" stroke-width="0.8"/>
<path d="M5.6 3.3 Q5.8 0.9 8.2 0.9 Q10.7 0.9 10.8 3.3 Z" fill="#111"/>
<path d="M6 3.6 H10.4 Q10.4 6.6 8.2 6.6 Q6 6.6 6 3.6 Z" fill="none" stroke="#111" stroke-width="0.9"/>
<path d="M3.8 12.8 Q4 8 8.2 7.8 Q12.6 8 12.8 12.8 Z" fill="#111"/>
<line x1="6" y1="10.2" x2="10.6" y2="10.2" stroke="#fff" stroke-width="0.6"/></svg><svg style="position:absolute;left:1034px;top:178.04px" width="13" height="13" viewBox="0 0 13 13">
<path d="M6 1.4 H2.2 Q1 1.4 1 2.6 V10.9 Q1 12.1 2.2 12.1 H10.1 Q11.3 12.1 11.3 10.9 V7.3" fill="none" stroke="#111" stroke-width="1.7"/>
<path d="M10.5 0.6 L12.5 2.6 L6.2 8.9 L3.6 9.6 L4.3 7 Z" fill="#111"/></svg><svg style="position:absolute;left:1056.5px;top:177.84px" width="11" height="13" viewBox="0 0 11 13">
<rect x="4.5" y="0" width="1.8" height="2" rx="0.5" fill="#e8152d"/>
<rect x="0.2" y="1.6" width="10.4" height="1.5" rx="0.6" fill="#e8152d"/>
<path d="M1.3 3.7 H9.5 V11.4 Q9.5 12.9 8 12.9 H2.8 Q1.3 12.9 1.3 11.4 Z" fill="#e8152d"/>
<rect x="3.1" y="5" width="0.8" height="6.2" fill="#f5b4bb"/><rect x="5" y="5" width="0.8" height="6.2" fill="#f5b4bb"/><rect x="6.9" y="5" width="0.8" height="6.2" fill="#f5b4bb"/></svg><div style="position:absolute;left:206.2px;top:194.02px;width:1313px;height:1px;background:#ebebeb;"></div><div style="position:absolute;left:1147px;top:172.84px;width:335.9px;height:19.4px;box-sizing:border-box;background:#3db9d3;border:1px solid #2898b0;border-radius:2px;overflow:hidden;"><div style="position:absolute;left:0px;top:0px;width:86.6px;height:18px;background:#2898b0;"></div></div><div style="position:absolute;left:1148px;top:172.84px;width:85.59502px;height:19.4px;line-height:18px;text-align:center;white-space:pre;font-family:'Liberation Sans',sans-serif;font-size:12px;font-weight:bold;color:#fff;">25.78%</div><div style="position:absolute;left:1501px;top:176.74px;white-space:pre;font-family:'Liberation Sans',sans-serif;font-size:10.9px;color:#666;font-weight:bold;width:17.5px;overflow:hidden;">Task Name : ...</div><div style="position:absolute;left:206px;top:201.02px;white-space:pre;font-family:'Liberation Sans',sans-serif;font-size:10.7px;color:#454545;width:49.5px;overflow:hidden;text-align:center;">B-1</div><svg style="position:absolute;left:300.5px;top:197.82px" width="15" height="19" viewBox="0 0 15 19">
<rect x="1" y="1.9" width="12.7" height="16" fill="none" stroke="#8a8a8a" stroke-width="1.5"/>
<path d="M3.9 1.9 V4 H10.8 V1.9 Z" fill="#fff" stroke="#8a8a8a" stroke-width="1.2"/>
<circle cx="7.35" cy="1.3" r="0.9" fill="#8a8a8a"/>
<path d="M3.3 15.5 L3.6 13 L9.9 6.7 L11.9 8.7 L5.6 15 Z M9 7.6 L11 9.6" fill="none" stroke="#8a8a8a" stroke-width="1.1"/></svg><div style="position:absolute;left:321.8px;top:201.02px;white-space:pre;font-family:'Liberation Sans',sans-serif;font-size:10.7px;color:#454545;color:#222;-webkit-text-stroke:0.12px #222;width:149.5px;overflow:hidden;">Excavation in hard rock of all total</div><div style="position:absolute;left:471.3px;top:201.02px;white-space:pre;font-family:'Liberation Sans',sans-serif;font-size:10.7px;color:#454545;width:59.30000000000001px;overflow:hidden;text-align:center;">CUM</div><div style="position:absolute;left:530.6px;top:201.02px;white-space:pre;font-family:'Liberation Sans',sans-serif;font-size:10.7px;color:#454545;width:61.799999999999955px;overflow:hidden;text-align:right;">83824.94</div><div style="position:absolute;left:599.4px;top:201.02px;white-space:pre;font-family:'Liberation Sans',sans-serif;font-size:10.7px;color:#454545;width:62.10000000000002px;overflow:hidden;text-align:right;">83824.94</div><div style="position:absolute;left:668.5px;top:201.02px;white-space:pre;font-family:'Liberation Sans',sans-serif;font-size:10.7px;color:#454545;width:61.89999999999998px;overflow:hidden;text-align:right;">78440</div><div style="position:absolute;left:737.4px;top:201.02px;white-space:pre;font-family:'Liberation Sans',sans-serif;font-size:10.7px;color:#454545;width:60.89999999999998px;overflow:hidden;text-align:right;">5384.94</div><div style="position:absolute;left:805.3px;top:201.02px;white-space:pre;font-family:'Liberation Sans',sans-serif;font-size:10.7px;color:#454545;width:62.200000000000045px;overflow:hidden;text-align:right;">71642.078</div><div style="position:absolute;left:874.5px;top:201.02px;white-space:pre;font-family:'Liberation Sans',sans-serif;font-size:10.7px;color:#454545;width:90.10000000000002px;overflow:hidden;text-align:right;">6797.922</div><div style="position:absolute;left:971.6px;top:201.02px;white-space:pre;font-family:'Liberation Sans',sans-serif;font-size:10.7px;color:#454545;width:29.0px;overflow:hidden;text-align:right;">93.58</div><svg style="position:absolute;left:1013.0px;top:202.12px" width="13" height="13" viewBox="0 0 13 13">
<ellipse cx="2.3" cy="2.2" rx="2" ry="2.2" fill="#111"/><line x1="2.5" y1="4" x2="4.5" y2="9" stroke="#111" stroke-width="0.8"/>
<path d="M5.6 3.3 Q5.8 0.9 8.2 0.9 Q10.7 0.9 10.8 3.3 Z" fill="#111"/>
<path d="M6 3.6 H10.4 Q10.4 6.6 8.2 6.6 Q6 6.6 6 3.6 Z" fill="none" stroke="#111" stroke-width="0.9"/>
<path d="M3.8 12.8 Q4 8 8.2 7.8 Q12.6 8 12.8 12.8 Z" fill="#111"/>
<line x1="6" y1="10.2" x2="10.6" y2="10.2" stroke="#fff" stroke-width="0.6"/></svg><svg style="position:absolute;left:1034px;top:202.32px" width="13" height="13" viewBox="0 0 13 13">
<path d="M6 1.4 H2.2 Q1 1.4 1 2.6 V10.9 Q1 12.1 2.2 12.1 H10.1 Q11.3 12.1 11.3 10.9 V7.3" fill="none" stroke="#111" stroke-width="1.7"/>
<path d="M10.5 0.6 L12.5 2.6 L6.2 8.9 L3.6 9.6 L4.3 7 Z" fill="#111"/></svg><svg style="position:absolute;left:1056.5px;top:202.12px" width="11" height="13" viewBox="0 0 11 13">
<rect x="4.5" y="0" width="1.8" height="2" rx="0.5" fill="#e8152d"/>
<rect x="0.2" y="1.6" width="10.4" height="1.5" rx="0.6" fill="#e8152d"/>
<path d="M1.3 3.7 H9.5 V11.4 Q9.5 12.9 8 12.9 H2.8 Q1.3 12.9 1.3 11.4 Z" fill="#e8152d"/>
<rect x="3.1" y="5" width="0.8" height="6.2" fill="#f5b4bb"/><rect x="5" y="5" width="0.8" height="6.2" fill="#f5b4bb"/><rect x="6.9" y="5" width="0.8" height="6.2" fill="#f5b4bb"/></svg><div style="position:absolute;left:206.2px;top:218.3px;width:1313px;height:1px;background:#ebebeb;"></div><div style="position:absolute;left:1147px;top:197.12px;width:335.9px;height:19.4px;box-sizing:border-box;background:#3db9d3;border:1px solid #2898b0;border-radius:2px;overflow:hidden;"><div style="position:absolute;left:0px;top:0px;width:314.3px;height:18px;background:#2898b0;"></div></div><div style="position:absolute;left:1148px;top:197.12px;width:313.33522px;height:19.4px;line-height:18px;text-align:center;white-space:pre;font-family:'Liberation Sans',sans-serif;font-size:12px;font-weight:bold;color:#fff;">93.58%</div><div style="position:absolute;left:1501px;top:201.02px;white-space:pre;font-family:'Liberation Sans',sans-serif;font-size:10.9px;color:#666;font-weight:bold;width:17.5px;overflow:hidden;">Task Name : ...</div><div style="position:absolute;left:206px;top:225.3px;white-space:pre;font-family:'Liberation Sans',sans-serif;font-size:10.7px;color:#454545;width:49.5px;overflow:hidden;text-align:center;">C-3</div><svg style="position:absolute;left:300.5px;top:222.1px" width="15" height="19" viewBox="0 0 15 19">
<rect x="1" y="1.9" width="12.7" height="16" fill="none" stroke="#8a8a8a" stroke-width="1.5"/>
<path d="M3.9 1.9 V4 H10.8 V1.9 Z" fill="#fff" stroke="#8a8a8a" stroke-width="1.2"/>
<circle cx="7.35" cy="1.3" r="0.9" fill="#8a8a8a"/>
<path d="M3.3 15.5 L3.6 13 L9.9 6.7 L11.9 8.7 L5.6 15 Z M9 7.6 L11 9.6" fill="none" stroke="#8a8a8a" stroke-width="1.1"/></svg><div style="position:absolute;left:321.8px;top:225.3px;white-space:pre;font-family:'Liberation Sans',sans-serif;font-size:10.7px;color:#454545;color:#222;-webkit-text-stroke:0.12px #222;width:149.5px;overflow:hidden;">Earthwork for cut off trench filling</div><div style="position:absolute;left:471.3px;top:225.3px;white-space:pre;font-family:'Liberation Sans',sans-serif;font-size:10.7px;color:#454545;width:59.30000000000001px;overflow:hidden;text-align:center;">CUM</div><div style="position:absolute;left:530.6px;top:225.3px;white-space:pre;font-family:'Liberation Sans',sans-serif;font-size:10.7px;color:#454545;width:61.799999999999955px;overflow:hidden;text-align:right;">1695782.31</div><div style="position:absolute;left:599.4px;top:225.3px;white-space:pre;font-family:'Liberation Sans',sans-serif;font-size:10.7px;color:#454545;width:62.10000000000002px;overflow:hidden;text-align:right;">1695782.31</div><div style="position:absolute;left:668.5px;top:225.3px;white-space:pre;font-family:'Liberation Sans',sans-serif;font-size:10.7px;color:#454545;width:61.89999999999998px;overflow:hidden;text-align:right;">229028</div><div style="position:absolute;left:737.4px;top:225.3px;white-space:pre;font-family:'Liberation Sans',sans-serif;font-size:10.7px;color:#454545;width:60.89999999999998px;overflow:hidden;text-align:right;">1466754.31</div><div style="position:absolute;left:805.3px;top:225.3px;white-space:pre;font-family:'Liberation Sans',sans-serif;font-size:10.7px;color:#454545;width:62.200000000000045px;overflow:hidden;text-align:right;">186245.46</div><div style="position:absolute;left:874.5px;top:225.3px;white-space:pre;font-family:'Liberation Sans',sans-serif;font-size:10.7px;color:#454545;width:90.10000000000002px;overflow:hidden;text-align:right;">42782.54</div><div style="position:absolute;left:971.6px;top:225.3px;white-space:pre;font-family:'Liberation Sans',sans-serif;font-size:10.7px;color:#454545;width:29.0px;overflow:hidden;text-align:right;">13.51</div><svg style="position:absolute;left:1013.0px;top:226.4px" width="13" height="13" viewBox="0 0 13 13">
<ellipse cx="2.3" cy="2.2" rx="2" ry="2.2" fill="#111"/><line x1="2.5" y1="4" x2="4.5" y2="9" stroke="#111" stroke-width="0.8"/>
<path d="M5.6 3.3 Q5.8 0.9 8.2 0.9 Q10.7 0.9 10.8 3.3 Z" fill="#111"/>
<path d="M6 3.6 H10.4 Q10.4 6.6 8.2 6.6 Q6 6.6 6 3.6 Z" fill="none" stroke="#111" stroke-width="0.9"/>
<path d="M3.8 12.8 Q4 8 8.2 7.8 Q12.6 8 12.8 12.8 Z" fill="#111"/>
<line x1="6" y1="10.2" x2="10.6" y2="10.2" stroke="#fff" stroke-width="0.6"/></svg><svg style="position:absolute;left:1034px;top:226.6px" width="13" height="13" viewBox="0 0 13 13">
<path d="M6 1.4 H2.2 Q1 1.4 1 2.6 V10.9 Q1 12.1 2.2 12.1 H10.1 Q11.3 12.1 11.3 10.9 V7.3" fill="none" stroke="#111" stroke-width="1.7"/>
<path d="M10.5 0.6 L12.5 2.6 L6.2 8.9 L3.6 9.6 L4.3 7 Z" fill="#111"/></svg><svg style="position:absolute;left:1056.5px;top:226.4px" width="11" height="13" viewBox="0 0 11 13">
<rect x="4.5" y="0" width="1.8" height="2" rx="0.5" fill="#e8152d"/>
<rect x="0.2" y="1.6" width="10.4" height="1.5" rx="0.6" fill="#e8152d"/>
<path d="M1.3 3.7 H9.5 V11.4 Q9.5 12.9 8 12.9 H2.8 Q1.3 12.9 1.3 11.4 Z" fill="#e8152d"/>
<rect x="3.1" y="5" width="0.8" height="6.2" fill="#f5b4bb"/><rect x="5" y="5" width="0.8" height="6.2" fill="#f5b4bb"/><rect x="6.9" y="5" width="0.8" height="6.2" fill="#f5b4bb"/></svg><div style="position:absolute;left:206.2px;top:242.58px;width:1313px;height:1px;background:#ebebeb;"></div><div style="position:absolute;left:1147px;top:221.4px;width:335.9px;height:19.4px;box-sizing:border-box;background:#3db9d3;border:1px solid #2898b0;border-radius:2px;overflow:hidden;"><div style="position:absolute;left:0px;top:0px;width:45.4px;height:18px;background:#2898b0;"></div></div><div style="position:absolute;left:1148px;top:221.4px;width:44.38009px;height:19.4px;line-height:18px;text-align:center;white-space:pre;font-family:'Liberation Sans',sans-serif;font-size:12px;font-weight:bold;color:#fff;">13.51%</div><div style="position:absolute;left:1501px;top:225.3px;white-space:pre;font-family:'Liberation Sans',sans-serif;font-size:10.9px;color:#666;font-weight:bold;width:17.5px;overflow:hidden;">Task Name : ...</div><div style="position:absolute;left:206px;top:249.58px;white-space:pre;font-family:'Liberation Sans',sans-serif;font-size:10.7px;color:#454545;width:49.5px;overflow:hidden;text-align:center;">C-4</div><svg style="position:absolute;left:300.5px;top:246.38px" width="15" height="19" viewBox="0 0 15 19">
<rect x="1" y="1.9" width="12.7" height="16" fill="none" stroke="#8a8a8a" stroke-width="1.5"/>
<path d="M3.9 1.9 V4 H10.8 V1.9 Z" fill="#fff" stroke="#8a8a8a" stroke-width="1.2"/>
<circle cx="7.35" cy="1.3" r="0.9" fill="#8a8a8a"/>
<path d="M3.3 15.5 L3.6 13 L9.9 6.7 L11.9 8.7 L5.6 15 Z M9 7.6 L11 9.6" fill="none" stroke="#8a8a8a" stroke-width="1.1"/></svg><div style="position:absolute;left:321.8px;top:249.58px;white-space:pre;font-family:'Liberation Sans',sans-serif;font-size:10.7px;color:#454545;color:#222;-webkit-text-stroke:0.12px #222;width:149.5px;overflow:hidden;">Providing filter blanket horizontal</div><div style="position:absolute;left:471.3px;top:249.58px;white-space:pre;font-family:'Liberation Sans',sans-serif;font-size:10.7px;color:#454545;width:59.30000000000001px;overflow:hidden;text-align:center;">CUM</div><div style="position:absolute;left:530.6px;top:249.58px;white-space:pre;font-family:'Liberation Sans',sans-serif;font-size:10.7px;color:#454545;width:61.799999999999955px;overflow:hidden;text-align:right;">38701.23</div><div style="position:absolute;left:599.4px;top:249.58px;white-space:pre;font-family:'Liberation Sans',sans-serif;font-size:10.7px;color:#454545;width:62.10000000000002px;overflow:hidden;text-align:right;">38701.23</div><div style="position:absolute;left:668.5px;top:249.58px;white-space:pre;font-family:'Liberation Sans',sans-serif;font-size:10.7px;color:#454545;width:61.89999999999998px;overflow:hidden;text-align:right;">12656</div><div style="position:absolute;left:737.4px;top:249.58px;white-space:pre;font-family:'Liberation Sans',sans-serif;font-size:10.7px;color:#454545;width:60.89999999999998px;overflow:hidden;text-align:right;">26045.23</div><div style="position:absolute;left:805.3px;top:249.58px;white-space:pre;font-family:'Liberation Sans',sans-serif;font-size:10.7px;color:#454545;width:62.200000000000045px;overflow:hidden;text-align:right;">2119</div><div style="position:absolute;left:874.5px;top:249.58px;white-space:pre;font-family:'Liberation Sans',sans-serif;font-size:10.7px;color:#454545;width:90.10000000000002px;overflow:hidden;text-align:right;">10537</div><div style="position:absolute;left:971.6px;top:249.58px;white-space:pre;font-family:'Liberation Sans',sans-serif;font-size:10.7px;color:#454545;width:29.0px;overflow:hidden;text-align:right;">32.7</div><svg style="position:absolute;left:1013.0px;top:250.68px" width="13" height="13" viewBox="0 0 13 13">
<ellipse cx="2.3" cy="2.2" rx="2" ry="2.2" fill="#111"/><line x1="2.5" y1="4" x2="4.5" y2="9" stroke="#111" stroke-width="0.8"/>
<path d="M5.6 3.3 Q5.8 0.9 8.2 0.9 Q10.7 0.9 10.8 3.3 Z" fill="#111"/>
<path d="M6 3.6 H10.4 Q10.4 6.6 8.2 6.6 Q6 6.6 6 3.6 Z" fill="none" stroke="#111" stroke-width="0.9"/>
<path d="M3.8 12.8 Q4 8 8.2 7.8 Q12.6 8 12.8 12.8 Z" fill="#111"/>
<line x1="6" y1="10.2" x2="10.6" y2="10.2" stroke="#fff" stroke-width="0.6"/></svg><svg style="position:absolute;left:1034px;top:250.88px" width="13" height="13" viewBox="0 0 13 13">
<path d="M6 1.4 H2.2 Q1 1.4 1 2.6 V10.9 Q1 12.1 2.2 12.1 H10.1 Q11.3 12.1 11.3 10.9 V7.3" fill="none" stroke="#111" stroke-width="1.7"/>
<path d="M10.5 0.6 L12.5 2.6 L6.2 8.9 L3.6 9.6 L4.3 7 Z" fill="#111"/></svg><svg style="position:absolute;left:1056.5px;top:250.68px" width="11" height="13" viewBox="0 0 11 13">
<rect x="4.5" y="0" width="1.8" height="2" rx="0.5" fill="#e8152d"/>
<rect x="0.2" y="1.6" width="10.4" height="1.5" rx="0.6" fill="#e8152d"/>
<path d="M1.3 3.7 H9.5 V11.4 Q9.5 12.9 8 12.9 H2.8 Q1.3 12.9 1.3 11.4 Z" fill="#e8152d"/>
<rect x="3.1" y="5" width="0.8" height="6.2" fill="#f5b4bb"/><rect x="5" y="5" width="0.8" height="6.2" fill="#f5b4bb"/><rect x="6.9" y="5" width="0.8" height="6.2" fill="#f5b4bb"/></svg><div style="position:absolute;left:206.2px;top:266.86px;width:1313px;height:1px;background:#ebebeb;"></div><div style="position:absolute;left:1147px;top:245.68px;width:335.9px;height:19.4px;box-sizing:border-box;background:#3db9d3;border:1px solid #2898b0;border-radius:2px;overflow:hidden;"><div style="position:absolute;left:0px;top:0px;width:109.8px;height:18px;background:#2898b0;"></div></div><div style="position:absolute;left:1148px;top:245.68px;width:108.83930000000001px;height:19.4px;line-height:18px;text-align:center;white-space:pre;font-family:'Liberation Sans',sans-serif;font-size:12px;font-weight:bold;color:#fff;">32.7%</div><div style="position:absolute;left:1501px;top:249.58px;white-space:pre;font-family:'Liberation Sans',sans-serif;font-size:10.9px;color:#666;font-weight:bold;width:17.5px;overflow:hidden;">Task Name : ...</div><div style="position:absolute;left:206px;top:273.86px;white-space:pre;font-family:'Liberation Sans',sans-serif;font-size:10.7px;color:#454545;width:49.5px;overflow:hidden;text-align:center;">D-5</div><svg style="position:absolute;left:300.5px;top:270.66px" width="15" height="19" viewBox="0 0 15 19">
<rect x="1" y="1.9" width="12.7" height="16" fill="none" stroke="#8a8a8a" stroke-width="1.5"/>
<path d="M3.9 1.9 V4 H10.8 V1.9 Z" fill="#fff" stroke="#8a8a8a" stroke-width="1.2"/>
<circle cx="7.35" cy="1.3" r="0.9" fill="#8a8a8a"/>
<path d="M3.3 15.5 L3.6 13 L9.9 6.7 L11.9 8.7 L5.6 15 Z M9 7.6 L11 9.6" fill="none" stroke="#8a8a8a" stroke-width="1.1"/></svg><div style="position:absolute;left:321.8px;top:273.86px;white-space:pre;font-family:'Liberation Sans',sans-serif;font-size:10.7px;color:#454545;color:#222;-webkit-text-stroke:0.12px #222;width:149.5px;overflow:hidden;">Providing filter blanket horizontal</div><div style="position:absolute;left:471.3px;top:273.86px;white-space:pre;font-family:'Liberation Sans',sans-serif;font-size:10.7px;color:#454545;width:59.30000000000001px;overflow:hidden;text-align:center;">CUM</div><div style="position:absolute;left:530.6px;top:273.86px;white-space:pre;font-family:'Liberation Sans',sans-serif;font-size:10.7px;color:#454545;width:61.799999999999955px;overflow:hidden;text-align:right;">45782.42</div><div style="position:absolute;left:599.4px;top:273.86px;white-space:pre;font-family:'Liberation Sans',sans-serif;font-size:10.7px;color:#454545;width:62.10000000000002px;overflow:hidden;text-align:right;">45782.42</div><div style="position:absolute;left:668.5px;top:273.86px;white-space:pre;font-family:'Liberation Sans',sans-serif;font-size:10.7px;color:#454545;width:61.89999999999998px;overflow:hidden;text-align:right;">13182</div><div style="position:absolute;left:737.4px;top:273.86px;white-space:pre;font-family:'Liberation Sans',sans-serif;font-size:10.7px;color:#454545;width:60.89999999999998px;overflow:hidden;text-align:right;">32600.42</div><div style="position:absolute;left:805.3px;top:273.86px;white-space:pre;font-family:'Liberation Sans',sans-serif;font-size:10.7px;color:#454545;width:62.200000000000045px;overflow:hidden;text-align:right;">0</div><div style="position:absolute;left:874.5px;top:273.86px;white-space:pre;font-family:'Liberation Sans',sans-serif;font-size:10.7px;color:#454545;width:90.10000000000002px;overflow:hidden;text-align:right;">13182</div><div style="position:absolute;left:971.6px;top:273.86px;white-space:pre;font-family:'Liberation Sans',sans-serif;font-size:10.7px;color:#454545;width:29.0px;overflow:hidden;text-align:right;">28.79</div><svg style="position:absolute;left:1013.0px;top:274.96px" width="13" height="13" viewBox="0 0 13 13">
<ellipse cx="2.3" cy="2.2" rx="2" ry="2.2" fill="#111"/><line x1="2.5" y1="4" x2="4.5" y2="9" stroke="#111" stroke-width="0.8"/>
<path d="M5.6 3.3 Q5.8 0.9 8.2 0.9 Q10.7 0.9 10.8 3.3 Z" fill="#111"/>
<path d="M6 3.6 H10.4 Q10.4 6.6 8.2 6.6 Q6 6.6 6 3.6 Z" fill="none" stroke="#111" stroke-width="0.9"/>
<path d="M3.8 12.8 Q4 8 8.2 7.8 Q12.6 8 12.8 12.8 Z" fill="#111"/>
<line x1="6" y1="10.2" x2="10.6" y2="10.2" stroke="#fff" stroke-width="0.6"/></svg><svg style="position:absolute;left:1034px;top:275.16px" width="13" height="13" viewBox="0 0 13 13">
<path d="M6 1.4 H2.2 Q1 1.4 1 2.6 V10.9 Q1 12.1 2.2 12.1 H10.1 Q11.3 12.1 11.3 10.9 V7.3" fill="none" stroke="#111" stroke-width="1.7"/>
<path d="M10.5 0.6 L12.5 2.6 L6.2 8.9 L3.6 9.6 L4.3 7 Z" fill="#111"/></svg><svg style="position:absolute;left:1056.5px;top:274.96px" width="11" height="13" viewBox="0 0 11 13">
<rect x="4.5" y="0" width="1.8" height="2" rx="0.5" fill="#e8152d"/>
<rect x="0.2" y="1.6" width="10.4" height="1.5" rx="0.6" fill="#e8152d"/>
<path d="M1.3 3.7 H9.5 V11.4 Q9.5 12.9 8 12.9 H2.8 Q1.3 12.9 1.3 11.4 Z" fill="#e8152d"/>
<rect x="3.1" y="5" width="0.8" height="6.2" fill="#f5b4bb"/><rect x="5" y="5" width="0.8" height="6.2" fill="#f5b4bb"/><rect x="6.9" y="5" width="0.8" height="6.2" fill="#f5b4bb"/></svg><div style="position:absolute;left:206.2px;top:291.14px;width:1313px;height:1px;background:#ebebeb;"></div><div style="position:absolute;left:1147px;top:269.96px;width:335.9px;height:19.4px;box-sizing:border-box;background:#3db9d3;border:1px solid #2898b0;border-radius:2px;overflow:hidden;"><div style="position:absolute;left:0px;top:0px;width:96.7px;height:18px;background:#2898b0;"></div></div><div style="position:absolute;left:1148px;top:269.96000000000004px;width:95.70561px;height:19.4px;line-height:18px;text-align:center;white-space:pre;font-family:'Liberation Sans',sans-serif;font-size:12px;font-weight:bold;color:#fff;">28.79%</div><div style="position:absolute;left:1501px;top:273.86px;white-space:pre;font-family:'Liberation Sans',sans-serif;font-size:10.9px;color:#666;font-weight:bold;width:17.5px;overflow:hidden;">Task Name : ...</div><div style="position:absolute;left:206px;top:298.14px;white-space:pre;font-family:'Liberation Sans',sans-serif;font-size:10.7px;color:#454545;width:49.5px;overflow:hidden;text-align:center;">D-6</div><svg style="position:absolute;left:300.5px;top:294.94px" width="15" height="19" viewBox="0 0 15 19">
<rect x="1" y="1.9" width="12.7" height="16" fill="none" stroke="#8a8a8a" stroke-width="1.5"/>
<path d="M3.9 1.9 V4 H10.8 V1.9 Z" fill="#fff" stroke="#8a8a8a" stroke-width="1.2"/>
<circle cx="7.35" cy="1.3" r="0.9" fill="#8a8a8a"/>
<path d="M3.3 15.5 L3.6 13 L9.9 6.7 L11.9 8.7 L5.6 15 Z M9 7.6 L11 9.6" fill="none" stroke="#8a8a8a" stroke-width="1.1"/></svg><div style="position:absolute;left:321.8px;top:298.14px;white-space:pre;font-family:'Liberation Sans',sans-serif;font-size:10.7px;color:#454545;color:#222;-webkit-text-stroke:0.12px #222;width:149.5px;overflow:hidden;">Construction of rock toe in earth</div><div style="position:absolute;left:471.3px;top:298.14px;white-space:pre;font-family:'Liberation Sans',sans-serif;font-size:10.7px;color:#454545;width:59.30000000000001px;overflow:hidden;text-align:center;">CUM</div><div style="position:absolute;left:530.6px;top:298.14px;white-space:pre;font-family:'Liberation Sans',sans-serif;font-size:10.7px;color:#454545;width:61.799999999999955px;overflow:hidden;text-align:right;">107352.25</div><div style="position:absolute;left:599.4px;top:298.14px;white-space:pre;font-family:'Liberation Sans',sans-serif;font-size:10.7px;color:#454545;width:62.10000000000002px;overflow:hidden;text-align:right;">107352.25</div><div style="position:absolute;left:668.5px;top:298.14px;white-space:pre;font-family:'Liberation Sans',sans-serif;font-size:10.7px;color:#454545;width:61.89999999999998px;overflow:hidden;text-align:right;">11631</div><div style="position:absolute;left:737.4px;top:298.14px;white-space:pre;font-family:'Liberation Sans',sans-serif;font-size:10.7px;color:#454545;width:60.89999999999998px;overflow:hidden;text-align:right;">95721.25</div><div style="position:absolute;left:805.3px;top:298.14px;white-space:pre;font-family:'Liberation Sans',sans-serif;font-size:10.7px;color:#454545;width:62.200000000000045px;overflow:hidden;text-align:right;">0</div><div style="position:absolute;left:874.5px;top:298.14px;white-space:pre;font-family:'Liberation Sans',sans-serif;font-size:10.7px;color:#454545;width:90.10000000000002px;overflow:hidden;text-align:right;">11631</div><div style="position:absolute;left:971.6px;top:298.14px;white-space:pre;font-family:'Liberation Sans',sans-serif;font-size:10.7px;color:#454545;width:29.0px;overflow:hidden;text-align:right;">10.83</div><svg style="position:absolute;left:1013.0px;top:299.24px" width="13" height="13" viewBox="0 0 13 13">
<ellipse cx="2.3" cy="2.2" rx="2" ry="2.2" fill="#111"/><line x1="2.5" y1="4" x2="4.5" y2="9" stroke="#111" stroke-width="0.8"/>
<path d="M5.6 3.3 Q5.8 0.9 8.2 0.9 Q10.7 0.9 10.8 3.3 Z" fill="#111"/>
<path d="M6 3.6 H10.4 Q10.4 6.6 8.2 6.6 Q6 6.6 6 3.6 Z" fill="none" stroke="#111" stroke-width="0.9"/>
<path d="M3.8 12.8 Q4 8 8.2 7.8 Q12.6 8 12.8 12.8 Z" fill="#111"/>
<line x1="6" y1="10.2" x2="10.6" y2="10.2" stroke="#fff" stroke-width="0.6"/></svg><svg style="position:absolute;left:1034px;top:299.44px" width="13" height="13" viewBox="0 0 13 13">
<path d="M6 1.4 H2.2 Q1 1.4 1 2.6 V10.9 Q1 12.1 2.2 12.1 H10.1 Q11.3 12.1 11.3 10.9 V7.3" fill="none" stroke="#111" stroke-width="1.7"/>
<path d="M10.5 0.6 L12.5 2.6 L6.2 8.9 L3.6 9.6 L4.3 7 Z" fill="#111"/></svg><svg style="position:absolute;left:1056.5px;top:299.24px" width="11" height="13" viewBox="0 0 11 13">
<rect x="4.5" y="0" width="1.8" height="2" rx="0.5" fill="#e8152d"/>
<rect x="0.2" y="1.6" width="10.4" height="1.5" rx="0.6" fill="#e8152d"/>
<path d="M1.3 3.7 H9.5 V11.4 Q9.5 12.9 8 12.9 H2.8 Q1.3 12.9 1.3 11.4 Z" fill="#e8152d"/>
<rect x="3.1" y="5" width="0.8" height="6.2" fill="#f5b4bb"/><rect x="5" y="5" width="0.8" height="6.2" fill="#f5b4bb"/><rect x="6.9" y="5" width="0.8" height="6.2" fill="#f5b4bb"/></svg><div style="position:absolute;left:206.2px;top:315.42px;width:1313px;height:1px;background:#ebebeb;"></div><div style="position:absolute;left:1147px;top:294.24px;width:335.9px;height:19.4px;box-sizing:border-box;background:#3db9d3;border:1px solid #2898b0;border-radius:2px;overflow:hidden;"><div style="position:absolute;left:0px;top:0px;width:36.4px;height:18px;background:#2898b0;"></div></div><div style="position:absolute;left:1148px;top:294.24px;width:35.37797px;height:19.4px;line-height:18px;text-align:center;white-space:pre;font-family:'Liberation Sans',sans-serif;font-size:12px;font-weight:bold;color:#fff;">10.83%</div><div style="position:absolute;left:1501px;top:298.14px;white-space:pre;font-family:'Liberation Sans',sans-serif;font-size:10.9px;color:#666;font-weight:bold;width:17.5px;overflow:hidden;">Task Name : ...</div><div style="position:absolute;left:206px;top:322.42px;white-space:pre;font-family:'Liberation Sans',sans-serif;font-size:10.7px;color:#454545;width:49.5px;overflow:hidden;text-align:center;">D-7</div><svg style="position:absolute;left:300.5px;top:319.22px" width="15" height="19" viewBox="0 0 15 19">
<rect x="1" y="1.9" width="12.7" height="16" fill="none" stroke="#8a8a8a" stroke-width="1.5"/>
<path d="M3.9 1.9 V4 H10.8 V1.9 Z" fill="#fff" stroke="#8a8a8a" stroke-width="1.2"/>
<circle cx="7.35" cy="1.3" r="0.9" fill="#8a8a8a"/>
<path d="M3.3 15.5 L3.6 13 L9.9 6.7 L11.9 8.7 L5.6 15 Z M9 7.6 L11 9.6" fill="none" stroke="#8a8a8a" stroke-width="1.1"/></svg><div style="position:absolute;left:321.8px;top:322.42px;white-space:pre;font-family:'Liberation Sans',sans-serif;font-size:10.7px;color:#454545;color:#222;-webkit-text-stroke:0.12px #222;width:149.5px;overflow:hidden;">Preparing surface for turfing, incl</div><div style="position:absolute;left:471.3px;top:322.42px;white-space:pre;font-family:'Liberation Sans',sans-serif;font-size:10.7px;color:#454545;width:59.30000000000001px;overflow:hidden;text-align:center;">CUM</div><div style="position:absolute;left:530.6px;top:322.42px;white-space:pre;font-family:'Liberation Sans',sans-serif;font-size:10.7px;color:#454545;width:61.799999999999955px;overflow:hidden;text-align:right;">87514.7</div><div style="position:absolute;left:599.4px;top:322.42px;white-space:pre;font-family:'Liberation Sans',sans-serif;font-size:10.7px;color:#454545;width:62.10000000000002px;overflow:hidden;text-align:right;">87514.7</div><div style="position:absolute;left:668.5px;top:322.42px;white-space:pre;font-family:'Liberation Sans',sans-serif;font-size:10.7px;color:#454545;width:61.89999999999998px;overflow:hidden;text-align:right;">0</div><div style="position:absolute;left:737.4px;top:322.42px;white-space:pre;font-family:'Liberation Sans',sans-serif;font-size:10.7px;color:#454545;width:60.89999999999998px;overflow:hidden;text-align:right;">87514.7</div><div style="position:absolute;left:805.3px;top:322.42px;white-space:pre;font-family:'Liberation Sans',sans-serif;font-size:10.7px;color:#454545;width:62.200000000000045px;overflow:hidden;text-align:right;">0</div><div style="position:absolute;left:874.5px;top:322.42px;white-space:pre;font-family:'Liberation Sans',sans-serif;font-size:10.7px;color:#454545;width:90.10000000000002px;overflow:hidden;text-align:right;">0</div><div style="position:absolute;left:971.6px;top:322.42px;white-space:pre;font-family:'Liberation Sans',sans-serif;font-size:10.7px;color:#454545;width:29.0px;overflow:hidden;text-align:right;">0</div><svg style="position:absolute;left:1013.0px;top:323.52px" width="13" height="13" viewBox="0 0 13 13">
<ellipse cx="2.3" cy="2.2" rx="2" ry="2.2" fill="#111"/><line x1="2.5" y1="4" x2="4.5" y2="9" stroke="#111" stroke-width="0.8"/>
<path d="M5.6 3.3 Q5.8 0.9 8.2 0.9 Q10.7 0.9 10.8 3.3 Z" fill="#111"/>
<path d="M6 3.6 H10.4 Q10.4 6.6 8.2 6.6 Q6 6.6 6 3.6 Z" fill="none" stroke="#111" stroke-width="0.9"/>
<path d="M3.8 12.8 Q4 8 8.2 7.8 Q12.6 8 12.8 12.8 Z" fill="#111"/>
<line x1="6" y1="10.2" x2="10.6" y2="10.2" stroke="#fff" stroke-width="0.6"/></svg><svg style="position:absolute;left:1034px;top:323.72px" width="13" height="13" viewBox="0 0 13 13">
<path d="M6 1.4 H2.2 Q1 1.4 1 2.6 V10.9 Q1 12.1 2.2 12.1 H10.1 Q11.3 12.1 11.3 10.9 V7.3" fill="none" stroke="#111" stroke-width="1.7"/>
<path d="M10.5 0.6 L12.5 2.6 L6.2 8.9 L3.6 9.6 L4.3 7 Z" fill="#111"/></svg><svg style="position:absolute;left:1056.5px;top:323.52px" width="11" height="13" viewBox="0 0 11 13">
<rect x="4.5" y="0" width="1.8" height="2" rx="0.5" fill="#e8152d"/>
<rect x="0.2" y="1.6" width="10.4" height="1.5" rx="0.6" fill="#e8152d"/>
<path d="M1.3 3.7 H9.5 V11.4 Q9.5 12.9 8 12.9 H2.8 Q1.3 12.9 1.3 11.4 Z" fill="#e8152d"/>
<rect x="3.1" y="5" width="0.8" height="6.2" fill="#f5b4bb"/><rect x="5" y="5" width="0.8" height="6.2" fill="#f5b4bb"/><rect x="6.9" y="5" width="0.8" height="6.2" fill="#f5b4bb"/></svg><div style="position:absolute;left:206.2px;top:339.7px;width:1313px;height:1px;background:#ebebeb;"></div><div style="position:absolute;left:1147px;top:318.52px;width:335.9px;height:19.4px;box-sizing:border-box;background:#3db9d3;border:1px solid #2898b0;border-radius:2px;overflow:hidden;"><div style="position:absolute;left:0px;top:0px;width:0.0px;height:18px;background:#2898b0;"></div></div><div style="position:absolute;left:1148px;top:318.52000000000004px;width:1px;height:19.4px;line-height:18px;text-align:center;white-space:pre;font-family:'Liberation Sans',sans-serif;font-size:12px;font-weight:bold;color:#fff;">0%</div><div style="position:absolute;left:1501px;top:322.42px;white-space:pre;font-family:'Liberation Sans',sans-serif;font-size:10.9px;color:#666;font-weight:bold;width:17.5px;overflow:hidden;">Task Name : ...</div><div style="position:absolute;left:206px;top:346.70000000000005px;white-space:pre;font-family:'Liberation Sans',sans-serif;font-size:10.7px;color:#454545;width:49.5px;overflow:hidden;text-align:center;">2</div><svg style="position:absolute;left:266px;top:347.7px" width="11" height="11" viewBox="0 0 11 11">
<rect x="0.6" y="0.6" width="9.8" height="9.8" rx="1.5" fill="#f6f6f6" stroke="#9a9a9a" stroke-width="1.1"/>
<line x1="2.8" y1="5.5" x2="8.2" y2="5.5" stroke="#333" stroke-width="1.2"/></svg><svg style="position:absolute;left:283.5px;top:345.9px" width="19" height="14" viewBox="0 0 19 14">
<path d="M1.5 12.8 V2.2 Q1.5 1 2.7 1 H7 L8.5 2.6 H15.8 Q17 2.6 17 3.8 V5.5" fill="none" stroke="#8f8f8f" stroke-width="1.3"/>
<path d="M1.5 12.8 L0.8 5.5 H17.8 L17 12.8 Z" fill="none" stroke="#8f8f8f" stroke-width="1.3" stroke-linejoin="round"/></svg><div style="position:absolute;left:307px;top:346.70000000000005px;white-space:pre;font-family:'Liberation Sans',sans-serif;font-size:10.7px;color:#3a2ff0;width:164.3px;overflow:hidden;">Sub Contractor Item</div><div style="position:absolute;left:530.6px;top:346.70000000000005px;white-space:pre;font-family:'Liberation Sans',sans-serif;font-size:10.7px;color:#454545;width:61.799999999999955px;overflow:hidden;text-align:right;">0</div><div style="position:absolute;left:599.4px;top:346.70000000000005px;white-space:pre;font-family:'Liberation Sans',sans-serif;font-size:10.7px;color:#454545;width:62.10000000000002px;overflow:hidden;text-align:right;">1</div><div style="position:absolute;left:668.5px;top:346.70000000000005px;white-space:pre;font-family:'Liberation Sans',sans-serif;font-size:10.7px;color:#454545;width:61.89999999999998px;overflow:hidden;text-align:right;">0</div><div style="position:absolute;left:737.4px;top:346.70000000000005px;white-space:pre;font-family:'Liberation Sans',sans-serif;font-size:10.7px;color:#454545;width:60.89999999999998px;overflow:hidden;text-align:right;">1</div><div style="position:absolute;left:805.3px;top:346.70000000000005px;white-space:pre;font-family:'Liberation Sans',sans-serif;font-size:10.7px;color:#454545;width:62.200000000000045px;overflow:hidden;text-align:right;">0</div><div style="position:absolute;left:874.5px;top:346.70000000000005px;white-space:pre;font-family:'Liberation Sans',sans-serif;font-size:10.7px;color:#454545;width:90.10000000000002px;overflow:hidden;text-align:right;">0</div><div style="position:absolute;left:971.6px;top:346.70000000000005px;white-space:pre;font-family:'Liberation Sans',sans-serif;font-size:10.7px;color:#454545;width:29.0px;overflow:hidden;text-align:right;">0</div><svg style="position:absolute;left:1013.0px;top:347.8px" width="13" height="13" viewBox="0 0 13 13">
<rect x="0.9" y="0.9" width="8.7" height="10.2" rx="0.8" fill="none" stroke="#111" stroke-width="1.6"/>
<line x1="2.9" y1="3.4" x2="7.6" y2="3.4" stroke="#111" stroke-width="1.1"/><line x1="2.9" y1="5.5" x2="7.6" y2="5.5" stroke="#111" stroke-width="1.1"/><line x1="2.9" y1="7.6" x2="7.6" y2="7.6" stroke="#111" stroke-width="1.1"/>
<path d="M7.6 10.4 L9.6 12.3 L12.4 8.8" fill="none" stroke="#111" stroke-width="1.7"/></svg><svg style="position:absolute;left:1034px;top:348.0px" width="13" height="13" viewBox="0 0 13 13">
<path d="M6 1.4 H2.2 Q1 1.4 1 2.6 V10.9 Q1 12.1 2.2 12.1 H10.1 Q11.3 12.1 11.3 10.9 V7.3" fill="none" stroke="#111" stroke-width="1.7"/>
<path d="M10.5 0.6 L12.5 2.6 L6.2 8.9 L3.6 9.6 L4.3 7 Z" fill="#111"/></svg><svg style="position:absolute;left:1056.5px;top:347.8px" width="11" height="13" viewBox="0 0 11 13">
<rect x="4.5" y="0" width="1.8" height="2" rx="0.5" fill="#e8152d"/>
<rect x="0.2" y="1.6" width="10.4" height="1.5" rx="0.6" fill="#e8152d"/>
<path d="M1.3 3.7 H9.5 V11.4 Q9.5 12.9 8 12.9 H2.8 Q1.3 12.9 1.3 11.4 Z" fill="#e8152d"/>
<rect x="3.1" y="5" width="0.8" height="6.2" fill="#f5b4bb"/><rect x="5" y="5" width="0.8" height="6.2" fill="#f5b4bb"/><rect x="6.9" y="5" width="0.8" height="6.2" fill="#f5b4bb"/></svg><div style="position:absolute;left:206.2px;top:363.98px;width:1313px;height:1px;background:#ebebeb;"></div><div style="position:absolute;left:1000px;top:346.40000000000003px;width:320px;text-align:right;white-space:pre;font-family:'Liberation Sans',sans-serif;font-size:10.7px;color:#6a6a6a;"><b>Group/Sub-Group :</b> Sub Contractor Item</div><div style="position:absolute;left:1337.5px;top:343.4px;width:2px;height:18.5px;background:#3c9a3c;"></div><div style="position:absolute;left:206px;top:370.98px;white-space:pre;font-family:'Liberation Sans',sans-serif;font-size:10.7px;color:#454545;width:49.5px;overflow:hidden;text-align:center;"></div><svg style="position:absolute;left:281px;top:371.98px" width="11" height="11" viewBox="0 0 11 11">
<rect x="0.6" y="0.6" width="9.8" height="9.8" rx="1.5" fill="#f6f6f6" stroke="#9a9a9a" stroke-width="1.1"/>
<line x1="2.8" y1="5.5" x2="8.2" y2="5.5" stroke="#333" stroke-width="1.2"/></svg><svg style="position:absolute;left:298.5px;top:370.18px" width="19" height="14" viewBox="0 0 19 14">
<path d="M1.5 12.8 V2.2 Q1.5 1 2.7 1 H7 L8.5 2.6 H15.8 Q17 2.6 17 3.8 V5.5" fill="none" stroke="#8f8f8f" stroke-width="1.3"/>
<path d="M1.5 12.8 L0.8 5.5 H17.8 L17 12.8 Z" fill="none" stroke="#8f8f8f" stroke-width="1.3" stroke-linejoin="round"/></svg><div style="position:absolute;left:321px;top:370.98px;white-space:pre;font-family:'Liberation Sans',sans-serif;font-size:10.7px;color:#3a2ff0;width:150.3px;overflow:hidden;">Earthwork</div><div style="position:absolute;left:530.6px;top:370.98px;white-space:pre;font-family:'Liberation Sans',sans-serif;font-size:10.7px;color:#454545;width:61.799999999999955px;overflow:hidden;text-align:right;">0</div><div style="position:absolute;left:599.4px;top:370.98px;white-space:pre;font-family:'Liberation Sans',sans-serif;font-size:10.7px;color:#454545;width:62.10000000000002px;overflow:hidden;text-align:right;">0</div><div style="position:absolute;left:668.5px;top:370.98px;white-space:pre;font-family:'Liberation Sans',sans-serif;font-size:10.7px;color:#454545;width:61.89999999999998px;overflow:hidden;text-align:right;">0</div><div style="position:absolute;left:737.4px;top:370.98px;white-space:pre;font-family:'Liberation Sans',sans-serif;font-size:10.7px;color:#454545;width:60.89999999999998px;overflow:hidden;text-align:right;">0</div><div style="position:absolute;left:805.3px;top:370.98px;white-space:pre;font-family:'Liberation Sans',sans-serif;font-size:10.7px;color:#454545;width:62.200000000000045px;overflow:hidden;text-align:right;">0</div><div style="position:absolute;left:874.5px;top:370.98px;white-space:pre;font-family:'Liberation Sans',sans-serif;font-size:10.7px;color:#454545;width:90.10000000000002px;overflow:hidden;text-align:right;">0</div><div style="position:absolute;left:971.6px;top:370.98px;white-space:pre;font-family:'Liberation Sans',sans-serif;font-size:10.7px;color:#454545;width:29.0px;overflow:hidden;text-align:right;">0</div><svg style="position:absolute;left:1013.0px;top:372.08px" width="13" height="13" viewBox="0 0 13 13">
<rect x="0.9" y="0.9" width="8.7" height="10.2" rx="0.8" fill="none" stroke="#111" stroke-width="1.6"/>
<line x1="2.9" y1="3.4" x2="7.6" y2="3.4" stroke="#111" stroke-width="1.1"/><line x1="2.9" y1="5.5" x2="7.6" y2="5.5" stroke="#111" stroke-width="1.1"/><line x1="2.9" y1="7.6" x2="7.6" y2="7.6" stroke="#111" stroke-width="1.1"/>
<path d="M7.6 10.4 L9.6 12.3 L12.4 8.8" fill="none" stroke="#111" stroke-width="1.7"/></svg><svg style="position:absolute;left:1034px;top:372.28px" width="13" height="13" viewBox="0 0 13 13">
<path d="M6 1.4 H2.2 Q1 1.4 1 2.6 V10.9 Q1 12.1 2.2 12.1 H10.1 Q11.3 12.1 11.3 10.9 V7.3" fill="none" stroke="#111" stroke-width="1.7"/>
<path d="M10.5 0.6 L12.5 2.6 L6.2 8.9 L3.6 9.6 L4.3 7 Z" fill="#111"/></svg><svg style="position:absolute;left:1056.5px;top:372.08px" width="11" height="13" viewBox="0 0 11 13">
<rect x="4.5" y="0" width="1.8" height="2" rx="0.5" fill="#e8152d"/>
<rect x="0.2" y="1.6" width="10.4" height="1.5" rx="0.6" fill="#e8152d"/>
<path d="M1.3 3.7 H9.5 V11.4 Q9.5 12.9 8 12.9 H2.8 Q1.3 12.9 1.3 11.4 Z" fill="#e8152d"/>
<rect x="3.1" y="5" width="0.8" height="6.2" fill="#f5b4bb"/><rect x="5" y="5" width="0.8" height="6.2" fill="#f5b4bb"/><rect x="6.9" y="5" width="0.8" height="6.2" fill="#f5b4bb"/></svg><div style="position:absolute;left:206.2px;top:388.26px;width:1313px;height:1px;background:#ebebeb;"></div><div style="position:absolute;left:1000px;top:370.68px;width:320px;text-align:right;white-space:pre;font-family:'Liberation Sans',sans-serif;font-size:10.7px;color:#6a6a6a;"><b>Group/Sub-Group :</b> Earthwork</div><div style="position:absolute;left:1337.5px;top:367.68px;width:2px;height:18.5px;background:#3c9a3c;"></div><div style="position:absolute;left:206px;top:395.26px;white-space:pre;font-family:'Liberation Sans',sans-serif;font-size:10.7px;color:#454545;width:49.5px;overflow:hidden;text-align:center;">V-E-1</div><svg style="position:absolute;left:315px;top:392.06px" width="15" height="19" viewBox="0 0 15 19">
<rect x="1" y="1.9" width="12.7" height="16" fill="none" stroke="#8a8a8a" stroke-width="1.5"/>
<path d="M3.9 1.9 V4 H10.8 V1.9 Z" fill="#fff" stroke="#8a8a8a" stroke-width="1.2"/>
<circle cx="7.35" cy="1.3" r="0.9" fill="#8a8a8a"/>
<path d="M3.3 15.5 L3.6 13 L9.9 6.7 L11.9 8.7 L5.6 15 Z M9 7.6 L11 9.6" fill="none" stroke="#8a8a8a" stroke-width="1.1"/></svg><div style="position:absolute;left:336.3px;top:395.26px;white-space:pre;font-family:'Liberation Sans',sans-serif;font-size:10.7px;color:#454545;color:#222;-webkit-text-stroke:0.12px #222;width:135.0px;overflow:hidden;">Excavation in soil with hydraulic</div><div style="position:absolute;left:471.3px;top:395.26px;white-space:pre;font-family:'Liberation Sans',sans-serif;font-size:10.7px;color:#454545;width:59.30000000000001px;overflow:hidden;text-align:center;">CUM</div><div style="position:absolute;left:530.6px;top:395.26px;white-space:pre;font-family:'Liberation Sans',sans-serif;font-size:10.7px;color:#454545;width:61.799999999999955px;overflow:hidden;text-align:right;">0</div><div style="position:absolute;left:599.4px;top:395.26px;white-space:pre;font-family:'Liberation Sans',sans-serif;font-size:10.7px;color:#454545;width:62.10000000000002px;overflow:hidden;text-align:right;">0</div><div style="position:absolute;left:668.5px;top:395.26px;white-space:pre;font-family:'Liberation Sans',sans-serif;font-size:10.7px;color:#454545;width:61.89999999999998px;overflow:hidden;text-align:right;">0</div><div style="position:absolute;left:737.4px;top:395.26px;white-space:pre;font-family:'Liberation Sans',sans-serif;font-size:10.7px;color:#454545;width:60.89999999999998px;overflow:hidden;text-align:right;">0</div><div style="position:absolute;left:805.3px;top:395.26px;white-space:pre;font-family:'Liberation Sans',sans-serif;font-size:10.7px;color:#454545;width:62.200000000000045px;overflow:hidden;text-align:right;">0</div><div style="position:absolute;left:874.5px;top:395.26px;white-space:pre;font-family:'Liberation Sans',sans-serif;font-size:10.7px;color:#454545;width:90.10000000000002px;overflow:hidden;text-align:right;">0</div><div style="position:absolute;left:971.6px;top:395.26px;white-space:pre;font-family:'Liberation Sans',sans-serif;font-size:10.7px;color:#454545;width:29.0px;overflow:hidden;text-align:right;">100</div><svg style="position:absolute;left:1013.0px;top:396.36px" width="13" height="13" viewBox="0 0 13 13">
<ellipse cx="2.3" cy="2.2" rx="2" ry="2.2" fill="#111"/><line x1="2.5" y1="4" x2="4.5" y2="9" stroke="#111" stroke-width="0.8"/>
<path d="M5.6 3.3 Q5.8 0.9 8.2 0.9 Q10.7 0.9 10.8 3.3 Z" fill="#111"/>
<path d="M6 3.6 H10.4 Q10.4 6.6 8.2 6.6 Q6 6.6 6 3.6 Z" fill="none" stroke="#111" stroke-width="0.9"/>
<path d="M3.8 12.8 Q4 8 8.2 7.8 Q12.6 8 12.8 12.8 Z" fill="#111"/>
<line x1="6" y1="10.2" x2="10.6" y2="10.2" stroke="#fff" stroke-width="0.6"/></svg><svg style="position:absolute;left:1034px;top:396.56px" width="13" height="13" viewBox="0 0 13 13">
<path d="M6 1.4 H2.2 Q1 1.4 1 2.6 V10.9 Q1 12.1 2.2 12.1 H10.1 Q11.3 12.1 11.3 10.9 V7.3" fill="none" stroke="#111" stroke-width="1.7"/>
<path d="M10.5 0.6 L12.5 2.6 L6.2 8.9 L3.6 9.6 L4.3 7 Z" fill="#111"/></svg><svg style="position:absolute;left:1056.5px;top:396.36px" width="11" height="13" viewBox="0 0 11 13">
<rect x="4.5" y="0" width="1.8" height="2" rx="0.5" fill="#e8152d"/>
<rect x="0.2" y="1.6" width="10.4" height="1.5" rx="0.6" fill="#e8152d"/>
<path d="M1.3 3.7 H9.5 V11.4 Q9.5 12.9 8 12.9 H2.8 Q1.3 12.9 1.3 11.4 Z" fill="#e8152d"/>
<rect x="3.1" y="5" width="0.8" height="6.2" fill="#f5b4bb"/><rect x="5" y="5" width="0.8" height="6.2" fill="#f5b4bb"/><rect x="6.9" y="5" width="0.8" height="6.2" fill="#f5b4bb"/></svg><div style="position:absolute;left:206.2px;top:412.54px;width:1313px;height:1px;background:#ebebeb;"></div><div style="position:absolute;left:1337.5px;top:391.96px;width:2px;height:18.5px;background:#2898b0;"></div><div style="position:absolute;left:1358.5px;top:395.26px;white-space:pre;font-family:'Liberation Sans',sans-serif;font-size:10.9px;color:#6a6a6a;width:160.5px;overflow:hidden;"><b>Task Name :</b> Excavation in soil with</div><div style="position:absolute;left:206px;top:419.53999999999996px;white-space:pre;font-family:'Liberation Sans',sans-serif;font-size:10.7px;color:#454545;width:49.5px;overflow:hidden;text-align:center;">V-E-2</div><svg style="position:absolute;left:315px;top:416.34px" width="15" height="19" viewBox="0 0 15 19">
<rect x="1" y="1.9" width="12.7" height="16" fill="none" stroke="#8a8a8a" stroke-width="1.5"/>
<path d="M3.9 1.9 V4 H10.8 V1.9 Z" fill="#fff" stroke="#8a8a8a" stroke-width="1.2"/>
<circle cx="7.35" cy="1.3" r="0.9" fill="#8a8a8a"/>
<path d="M3.3 15.5 L3.6 13 L9.9 6.7 L11.9 8.7 L5.6 15 Z M9 7.6 L11 9.6" fill="none" stroke="#8a8a8a" stroke-width="1.1"/></svg><div style="position:absolute;left:336.3px;top:419.53999999999996px;white-space:pre;font-family:'Liberation Sans',sans-serif;font-size:10.7px;color:#454545;color:#222;-webkit-text-stroke:0.12px #222;width:135.0px;overflow:hidden;">Excavation in soil with hydraulic</div><div style="position:absolute;left:471.3px;top:419.53999999999996px;white-space:pre;font-family:'Liberation Sans',sans-serif;font-size:10.7px;color:#454545;width:59.30000000000001px;overflow:hidden;text-align:center;">CUM</div><div style="position:absolute;left:530.6px;top:419.53999999999996px;white-space:pre;font-family:'Liberation Sans',sans-serif;font-size:10.7px;color:#454545;width:61.799999999999955px;overflow:hidden;text-align:right;">0</div><div style="position:absolute;left:599.4px;top:419.53999999999996px;white-space:pre;font-family:'Liberation Sans',sans-serif;font-size:10.7px;color:#454545;width:62.10000000000002px;overflow:hidden;text-align:right;">0</div><div style="position:absolute;left:668.5px;top:419.53999999999996px;white-space:pre;font-family:'Liberation Sans',sans-serif;font-size:10.7px;color:#454545;width:61.89999999999998px;overflow:hidden;text-align:right;">0</div><div style="position:absolute;left:737.4px;top:419.53999999999996px;white-space:pre;font-family:'Liberation Sans',sans-serif;font-size:10.7px;color:#454545;width:60.89999999999998px;overflow:hidden;text-align:right;">0</div><div style="position:absolute;left:805.3px;top:419.53999999999996px;white-space:pre;font-family:'Liberation Sans',sans-serif;font-size:10.7px;color:#454545;width:62.200000000000045px;overflow:hidden;text-align:right;">0</div><div style="position:absolute;left:874.5px;top:419.53999999999996px;white-space:pre;font-family:'Liberation Sans',sans-serif;font-size:10.7px;color:#454545;width:90.10000000000002px;overflow:hidden;text-align:right;">0</div><div style="position:absolute;left:971.6px;top:419.53999999999996px;white-space:pre;font-family:'Liberation Sans',sans-serif;font-size:10.7px;color:#454545;width:29.0px;overflow:hidden;text-align:right;">100</div><svg style="position:absolute;left:1013.0px;top:420.64px" width="13" height="13" viewBox="0 0 13 13">
<ellipse cx="2.3" cy="2.2" rx="2" ry="2.2" fill="#111"/><line x1="2.5" y1="4" x2="4.5" y2="9" stroke="#111" stroke-width="0.8"/>
<path d="M5.6 3.3 Q5.8 0.9 8.2 0.9 Q10.7 0.9 10.8 3.3 Z" fill="#111"/>
<path d="M6 3.6 H10.4 Q10.4 6.6 8.2 6.6 Q6 6.6 6 3.6 Z" fill="none" stroke="#111" stroke-width="0.9"/>
<path d="M3.8 12.8 Q4 8 8.2 7.8 Q12.6 8 12.8 12.8 Z" fill="#111"/>
<line x1="6" y1="10.2" x2="10.6" y2="10.2" stroke="#fff" stroke-width="0.6"/></svg><svg style="position:absolute;left:1034px;top:420.84px" width="13" height="13" viewBox="0 0 13 13">
<path d="M6 1.4 H2.2 Q1 1.4 1 2.6 V10.9 Q1 12.1 2.2 12.1 H10.1 Q11.3 12.1 11.3 10.9 V7.3" fill="none" stroke="#111" stroke-width="1.7"/>
<path d="M10.5 0.6 L12.5 2.6 L6.2 8.9 L3.6 9.6 L4.3 7 Z" fill="#111"/></svg><svg style="position:absolute;left:1056.5px;top:420.64px" width="11" height="13" viewBox="0 0 11 13">
<rect x="4.5" y="0" width="1.8" height="2" rx="0.5" fill="#e8152d"/>
<rect x="0.2" y="1.6" width="10.4" height="1.5" rx="0.6" fill="#e8152d"/>
<path d="M1.3 3.7 H9.5 V11.4 Q9.5 12.9 8 12.9 H2.8 Q1.3 12.9 1.3 11.4 Z" fill="#e8152d"/>
<rect x="3.1" y="5" width="0.8" height="6.2" fill="#f5b4bb"/><rect x="5" y="5" width="0.8" height="6.2" fill="#f5b4bb"/><rect x="6.9" y="5" width="0.8" height="6.2" fill="#f5b4bb"/></svg><div style="position:absolute;left:206.2px;top:436.82px;width:1313px;height:1px;background:#ebebeb;"></div><div style="position:absolute;left:1337.5px;top:416.24px;width:2px;height:18.5px;background:#2898b0;"></div><div style="position:absolute;left:1358.5px;top:419.53999999999996px;white-space:pre;font-family:'Liberation Sans',sans-serif;font-size:10.9px;color:#6a6a6a;width:160.5px;overflow:hidden;"><b>Task Name :</b> Excavation in soil with</div><div style="position:absolute;left:206px;top:443.82000000000005px;white-space:pre;font-family:'Liberation Sans',sans-serif;font-size:10.7px;color:#454545;width:49.5px;overflow:hidden;text-align:center;">V-E-3</div><svg style="position:absolute;left:315px;top:440.62px" width="15" height="19" viewBox="0 0 15 19">
<rect x="1" y="1.9" width="12.7" height="16" fill="none" stroke="#8a8a8a" stroke-width="1.5"/>
<path d="M3.9 1.9 V4 H10.8 V1.9 Z" fill="#fff" stroke="#8a8a8a" stroke-width="1.2"/>
<circle cx="7.35" cy="1.3" r="0.9" fill="#8a8a8a"/>
<path d="M3.3 15.5 L3.6 13 L9.9 6.7 L11.9 8.7 L5.6 15 Z M9 7.6 L11 9.6" fill="none" stroke="#8a8a8a" stroke-width="1.1"/></svg><div style="position:absolute;left:336.3px;top:443.82000000000005px;white-space:pre;font-family:'Liberation Sans',sans-serif;font-size:10.7px;color:#454545;color:#222;-webkit-text-stroke:0.12px #222;width:135.0px;overflow:hidden;">Excavation in soil with hydraulic</div><div style="position:absolute;left:471.3px;top:443.82000000000005px;white-space:pre;font-family:'Liberation Sans',sans-serif;font-size:10.7px;color:#454545;width:59.30000000000001px;overflow:hidden;text-align:center;">CUM</div><div style="position:absolute;left:530.6px;top:443.82000000000005px;white-space:pre;font-family:'Liberation Sans',sans-serif;font-size:10.7px;color:#454545;width:61.799999999999955px;overflow:hidden;text-align:right;">0</div><div style="position:absolute;left:599.4px;top:443.82000000000005px;white-space:pre;font-family:'Liberation Sans',sans-serif;font-size:10.7px;color:#454545;width:62.10000000000002px;overflow:hidden;text-align:right;">0</div><div style="position:absolute;left:668.5px;top:443.82000000000005px;white-space:pre;font-family:'Liberation Sans',sans-serif;font-size:10.7px;color:#454545;width:61.89999999999998px;overflow:hidden;text-align:right;">0</div><div style="position:absolute;left:737.4px;top:443.82000000000005px;white-space:pre;font-family:'Liberation Sans',sans-serif;font-size:10.7px;color:#454545;width:60.89999999999998px;overflow:hidden;text-align:right;">0</div><div style="position:absolute;left:805.3px;top:443.82000000000005px;white-space:pre;font-family:'Liberation Sans',sans-serif;font-size:10.7px;color:#454545;width:62.200000000000045px;overflow:hidden;text-align:right;">0</div><div style="position:absolute;left:874.5px;top:443.82000000000005px;white-space:pre;font-family:'Liberation Sans',sans-serif;font-size:10.7px;color:#454545;width:90.10000000000002px;overflow:hidden;text-align:right;">0</div><div style="position:absolute;left:971.6px;top:443.82000000000005px;white-space:pre;font-family:'Liberation Sans',sans-serif;font-size:10.7px;color:#454545;width:29.0px;overflow:hidden;text-align:right;">100</div><svg style="position:absolute;left:1013.0px;top:444.92px" width="13" height="13" viewBox="0 0 13 13">
<ellipse cx="2.3" cy="2.2" rx="2" ry="2.2" fill="#111"/><line x1="2.5" y1="4" x2="4.5" y2="9" stroke="#111" stroke-width="0.8"/>
<path d="M5.6 3.3 Q5.8 0.9 8.2 0.9 Q10.7 0.9 10.8 3.3 Z" fill="#111"/>
<path d="M6 3.6 H10.4 Q10.4 6.6 8.2 6.6 Q6 6.6 6 3.6 Z" fill="none" stroke="#111" stroke-width="0.9"/>
<path d="M3.8 12.8 Q4 8 8.2 7.8 Q12.6 8 12.8 12.8 Z" fill="#111"/>
<line x1="6" y1="10.2" x2="10.6" y2="10.2" stroke="#fff" stroke-width="0.6"/></svg><svg style="position:absolute;left:1034px;top:445.12px" width="13" height="13" viewBox="0 0 13 13">
<path d="M6 1.4 H2.2 Q1 1.4 1 2.6 V10.9 Q1 12.1 2.2 12.1 H10.1 Q11.3 12.1 11.3 10.9 V7.3" fill="none" stroke="#111" stroke-width="1.7"/>
<path d="M10.5 0.6 L12.5 2.6 L6.2 8.9 L3.6 9.6 L4.3 7 Z" fill="#111"/></svg><svg style="position:absolute;left:1056.5px;top:444.92px" width="11" height="13" viewBox="0 0 11 13">
<rect x="4.5" y="0" width="1.8" height="2" rx="0.5" fill="#e8152d"/>
<rect x="0.2" y="1.6" width="10.4" height="1.5" rx="0.6" fill="#e8152d"/>
<path d="M1.3 3.7 H9.5 V11.4 Q9.5 12.9 8 12.9 H2.8 Q1.3 12.9 1.3 11.4 Z" fill="#e8152d"/>
<rect x="3.1" y="5" width="0.8" height="6.2" fill="#f5b4bb"/><rect x="5" y="5" width="0.8" height="6.2" fill="#f5b4bb"/><rect x="6.9" y="5" width="0.8" height="6.2" fill="#f5b4bb"/></svg><div style="position:absolute;left:206.2px;top:461.1px;width:1313px;height:1px;background:#ebebeb;"></div><div style="position:absolute;left:1337.5px;top:440.52px;width:2px;height:18.5px;background:#2898b0;"></div><div style="position:absolute;left:1358.5px;top:443.82000000000005px;white-space:pre;font-family:'Liberation Sans',sans-serif;font-size:10.9px;color:#6a6a6a;width:160.5px;overflow:hidden;"><b>Task Name :</b> Excavation in soil with</div><div style="position:absolute;left:206px;top:468.1px;white-space:pre;font-family:'Liberation Sans',sans-serif;font-size:10.7px;color:#454545;width:49.5px;overflow:hidden;text-align:center;">V-E-4</div><svg style="position:absolute;left:315px;top:464.9px" width="15" height="19" viewBox="0 0 15 19">
<rect x="1" y="1.9" width="12.7" height="16" fill="none" stroke="#8a8a8a" stroke-width="1.5"/>
<path d="M3.9 1.9 V4 H10.8 V1.9 Z" fill="#fff" stroke="#8a8a8a" stroke-width="1.2"/>
<circle cx="7.35" cy="1.3" r="0.9" fill="#8a8a8a"/>
<path d="M3.3 15.5 L3.6 13 L9.9 6.7 L11.9 8.7 L5.6 15 Z M9 7.6 L11 9.6" fill="none" stroke="#8a8a8a" stroke-width="1.1"/></svg><div style="position:absolute;left:336.3px;top:468.1px;white-space:pre;font-family:'Liberation Sans',sans-serif;font-size:10.7px;color:#454545;color:#222;-webkit-text-stroke:0.12px #222;width:135.0px;overflow:hidden;">Excavation in Soft Rock with</div><div style="position:absolute;left:471.3px;top:468.1px;white-space:pre;font-family:'Liberation Sans',sans-serif;font-size:10.7px;color:#454545;width:59.30000000000001px;overflow:hidden;text-align:center;">CUM</div><div style="position:absolute;left:530.6px;top:468.1px;white-space:pre;font-family:'Liberation Sans',sans-serif;font-size:10.7px;color:#454545;width:61.799999999999955px;overflow:hidden;text-align:right;">0</div><div style="position:absolute;left:599.4px;top:468.1px;white-space:pre;font-family:'Liberation Sans',sans-serif;font-size:10.7px;color:#454545;width:62.10000000000002px;overflow:hidden;text-align:right;">0</div><div style="position:absolute;left:668.5px;top:468.1px;white-space:pre;font-family:'Liberation Sans',sans-serif;font-size:10.7px;color:#454545;width:61.89999999999998px;overflow:hidden;text-align:right;">0</div><div style="position:absolute;left:737.4px;top:468.1px;white-space:pre;font-family:'Liberation Sans',sans-serif;font-size:10.7px;color:#454545;width:60.89999999999998px;overflow:hidden;text-align:right;">0</div><div style="position:absolute;left:805.3px;top:468.1px;white-space:pre;font-family:'Liberation Sans',sans-serif;font-size:10.7px;color:#454545;width:62.200000000000045px;overflow:hidden;text-align:right;">0</div><div style="position:absolute;left:874.5px;top:468.1px;white-space:pre;font-family:'Liberation Sans',sans-serif;font-size:10.7px;color:#454545;width:90.10000000000002px;overflow:hidden;text-align:right;">0</div><div style="position:absolute;left:971.6px;top:468.1px;white-space:pre;font-family:'Liberation Sans',sans-serif;font-size:10.7px;color:#454545;width:29.0px;overflow:hidden;text-align:right;">100</div><svg style="position:absolute;left:1013.0px;top:469.2px" width="13" height="13" viewBox="0 0 13 13">
<ellipse cx="2.3" cy="2.2" rx="2" ry="2.2" fill="#111"/><line x1="2.5" y1="4" x2="4.5" y2="9" stroke="#111" stroke-width="0.8"/>
<path d="M5.6 3.3 Q5.8 0.9 8.2 0.9 Q10.7 0.9 10.8 3.3 Z" fill="#111"/>
<path d="M6 3.6 H10.4 Q10.4 6.6 8.2 6.6 Q6 6.6 6 3.6 Z" fill="none" stroke="#111" stroke-width="0.9"/>
<path d="M3.8 12.8 Q4 8 8.2 7.8 Q12.6 8 12.8 12.8 Z" fill="#111"/>
<line x1="6" y1="10.2" x2="10.6" y2="10.2" stroke="#fff" stroke-width="0.6"/></svg><svg style="position:absolute;left:1034px;top:469.4px" width="13" height="13" viewBox="0 0 13 13">
<path d="M6 1.4 H2.2 Q1 1.4 1 2.6 V10.9 Q1 12.1 2.2 12.1 H10.1 Q11.3 12.1 11.3 10.9 V7.3" fill="none" stroke="#111" stroke-width="1.7"/>
<path d="M10.5 0.6 L12.5 2.6 L6.2 8.9 L3.6 9.6 L4.3 7 Z" fill="#111"/></svg><svg style="position:absolute;left:1056.5px;top:469.2px" width="11" height="13" viewBox="0 0 11 13">
<rect x="4.5" y="0" width="1.8" height="2" rx="0.5" fill="#e8152d"/>
<rect x="0.2" y="1.6" width="10.4" height="1.5" rx="0.6" fill="#e8152d"/>
<path d="M1.3 3.7 H9.5 V11.4 Q9.5 12.9 8 12.9 H2.8 Q1.3 12.9 1.3 11.4 Z" fill="#e8152d"/>
<rect x="3.1" y="5" width="0.8" height="6.2" fill="#f5b4bb"/><rect x="5" y="5" width="0.8" height="6.2" fill="#f5b4bb"/><rect x="6.9" y="5" width="0.8" height="6.2" fill="#f5b4bb"/></svg><div style="position:absolute;left:206.2px;top:485.38px;width:1313px;height:1px;background:#ebebeb;"></div><div style="position:absolute;left:1337.5px;top:464.8px;width:2px;height:18.5px;background:#2898b0;"></div><div style="position:absolute;left:1358.5px;top:468.1px;white-space:pre;font-family:'Liberation Sans',sans-serif;font-size:10.9px;color:#6a6a6a;width:160.5px;overflow:hidden;"><b>Task Name :</b> Excavation in Soft Rock</div><div style="position:absolute;left:206px;top:492.38px;white-space:pre;font-family:'Liberation Sans',sans-serif;font-size:10.7px;color:#454545;width:49.5px;overflow:hidden;text-align:center;">V-E-5</div><svg style="position:absolute;left:315px;top:489.18px" width="15" height="19" viewBox="0 0 15 19">
<rect x="1" y="1.9" width="12.7" height="16" fill="none" stroke="#8a8a8a" stroke-width="1.5"/>
<path d="M3.9 1.9 V4 H10.8 V1.9 Z" fill="#fff" stroke="#8a8a8a" stroke-width="1.2"/>
<circle cx="7.35" cy="1.3" r="0.9" fill="#8a8a8a"/>
<path d="M3.3 15.5 L3.6 13 L9.9 6.7 L11.9 8.7 L5.6 15 Z M9 7.6 L11 9.6" fill="none" stroke="#8a8a8a" stroke-width="1.1"/></svg><div style="position:absolute;left:336.3px;top:492.38px;white-space:pre;font-family:'Liberation Sans',sans-serif;font-size:10.7px;color:#454545;color:#222;-webkit-text-stroke:0.12px #222;width:135.0px;overflow:hidden;">Excavation in Hard Rock with</div><div style="position:absolute;left:471.3px;top:492.38px;white-space:pre;font-family:'Liberation Sans',sans-serif;font-size:10.7px;color:#454545;width:59.30000000000001px;overflow:hidden;text-align:center;">CUM</div><div style="position:absolute;left:530.6px;top:492.38px;white-space:pre;font-family:'Liberation Sans',sans-serif;font-size:10.7px;color:#454545;width:61.799999999999955px;overflow:hidden;text-align:right;">0</div><div style="position:absolute;left:599.4px;top:492.38px;white-space:pre;font-family:'Liberation Sans',sans-serif;font-size:10.7px;color:#454545;width:62.10000000000002px;overflow:hidden;text-align:right;">0</div><div style="position:absolute;left:668.5px;top:492.38px;white-space:pre;font-family:'Liberation Sans',sans-serif;font-size:10.7px;color:#454545;width:61.89999999999998px;overflow:hidden;text-align:right;">0</div><div style="position:absolute;left:737.4px;top:492.38px;white-space:pre;font-family:'Liberation Sans',sans-serif;font-size:10.7px;color:#454545;width:60.89999999999998px;overflow:hidden;text-align:right;">0</div><div style="position:absolute;left:805.3px;top:492.38px;white-space:pre;font-family:'Liberation Sans',sans-serif;font-size:10.7px;color:#454545;width:62.200000000000045px;overflow:hidden;text-align:right;">0</div><div style="position:absolute;left:874.5px;top:492.38px;white-space:pre;font-family:'Liberation Sans',sans-serif;font-size:10.7px;color:#454545;width:90.10000000000002px;overflow:hidden;text-align:right;">0</div><div style="position:absolute;left:971.6px;top:492.38px;white-space:pre;font-family:'Liberation Sans',sans-serif;font-size:10.7px;color:#454545;width:29.0px;overflow:hidden;text-align:right;">100</div><svg style="position:absolute;left:1013.0px;top:493.48px" width="13" height="13" viewBox="0 0 13 13">
<ellipse cx="2.3" cy="2.2" rx="2" ry="2.2" fill="#111"/><line x1="2.5" y1="4" x2="4.5" y2="9" stroke="#111" stroke-width="0.8"/>
<path d="M5.6 3.3 Q5.8 0.9 8.2 0.9 Q10.7 0.9 10.8 3.3 Z" fill="#111"/>
<path d="M6 3.6 H10.4 Q10.4 6.6 8.2 6.6 Q6 6.6 6 3.6 Z" fill="none" stroke="#111" stroke-width="0.9"/>
<path d="M3.8 12.8 Q4 8 8.2 7.8 Q12.6 8 12.8 12.8 Z" fill="#111"/>
<line x1="6" y1="10.2" x2="10.6" y2="10.2" stroke="#fff" stroke-width="0.6"/></svg><svg style="position:absolute;left:1034px;top:493.68px" width="13" height="13" viewBox="0 0 13 13">
<path d="M6 1.4 H2.2 Q1 1.4 1 2.6 V10.9 Q1 12.1 2.2 12.1 H10.1 Q11.3 12.1 11.3 10.9 V7.3" fill="none" stroke="#111" stroke-width="1.7"/>
<path d="M10.5 0.6 L12.5 2.6 L6.2 8.9 L3.6 9.6 L4.3 7 Z" fill="#111"/></svg><svg style="position:absolute;left:1056.5px;top:493.48px" width="11" height="13" viewBox="0 0 11 13">
<rect x="4.5" y="0" width="1.8" height="2" rx="0.5" fill="#e8152d"/>
<rect x="0.2" y="1.6" width="10.4" height="1.5" rx="0.6" fill="#e8152d"/>
<path d="M1.3 3.7 H9.5 V11.4 Q9.5 12.9 8 12.9 H2.8 Q1.3 12.9 1.3 11.4 Z" fill="#e8152d"/>
<rect x="3.1" y="5" width="0.8" height="6.2" fill="#f5b4bb"/><rect x="5" y="5" width="0.8" height="6.2" fill="#f5b4bb"/><rect x="6.9" y="5" width="0.8" height="6.2" fill="#f5b4bb"/></svg><div style="position:absolute;left:206.2px;top:509.66px;width:1313px;height:1px;background:#ebebeb;"></div><div style="position:absolute;left:1337.5px;top:489.08px;width:2px;height:18.5px;background:#2898b0;"></div><div style="position:absolute;left:1358.5px;top:492.38px;white-space:pre;font-family:'Liberation Sans',sans-serif;font-size:10.9px;color:#6a6a6a;width:160.5px;overflow:hidden;"><b>Task Name :</b> Excavation in Hard Rock</div><div style="position:absolute;left:206px;top:516.66px;white-space:pre;font-family:'Liberation Sans',sans-serif;font-size:10.7px;color:#454545;width:49.5px;overflow:hidden;text-align:center;">V-E-6</div><svg style="position:absolute;left:315px;top:513.46px" width="15" height="19" viewBox="0 0 15 19">
<rect x="1" y="1.9" width="12.7" height="16" fill="none" stroke="#8a8a8a" stroke-width="1.5"/>
<path d="M3.9 1.9 V4 H10.8 V1.9 Z" fill="#fff" stroke="#8a8a8a" stroke-width="1.2"/>
<circle cx="7.35" cy="1.3" r="0.9" fill="#8a8a8a"/>
<path d="M3.3 15.5 L3.6 13 L9.9 6.7 L11.9 8.7 L5.6 15 Z M9 7.6 L11 9.6" fill="none" stroke="#8a8a8a" stroke-width="1.1"/></svg><div style="position:absolute;left:336.3px;top:516.66px;white-space:pre;font-family:'Liberation Sans',sans-serif;font-size:10.7px;color:#454545;color:#222;-webkit-text-stroke:0.12px #222;width:135.0px;overflow:hidden;">Construction of embankment</div><div style="position:absolute;left:471.3px;top:516.66px;white-space:pre;font-family:'Liberation Sans',sans-serif;font-size:10.7px;color:#454545;width:59.30000000000001px;overflow:hidden;text-align:center;">CUM</div><div style="position:absolute;left:530.6px;top:516.66px;white-space:pre;font-family:'Liberation Sans',sans-serif;font-size:10.7px;color:#454545;width:61.799999999999955px;overflow:hidden;text-align:right;">0</div><div style="position:absolute;left:599.4px;top:516.66px;white-space:pre;font-family:'Liberation Sans',sans-serif;font-size:10.7px;color:#454545;width:62.10000000000002px;overflow:hidden;text-align:right;">0</div><div style="position:absolute;left:668.5px;top:516.66px;white-space:pre;font-family:'Liberation Sans',sans-serif;font-size:10.7px;color:#454545;width:61.89999999999998px;overflow:hidden;text-align:right;">0</div><div style="position:absolute;left:737.4px;top:516.66px;white-space:pre;font-family:'Liberation Sans',sans-serif;font-size:10.7px;color:#454545;width:60.89999999999998px;overflow:hidden;text-align:right;">0</div><div style="position:absolute;left:805.3px;top:516.66px;white-space:pre;font-family:'Liberation Sans',sans-serif;font-size:10.7px;color:#454545;width:62.200000000000045px;overflow:hidden;text-align:right;">0</div><div style="position:absolute;left:874.5px;top:516.66px;white-space:pre;font-family:'Liberation Sans',sans-serif;font-size:10.7px;color:#454545;width:90.10000000000002px;overflow:hidden;text-align:right;">0</div><div style="position:absolute;left:971.6px;top:516.66px;white-space:pre;font-family:'Liberation Sans',sans-serif;font-size:10.7px;color:#454545;width:29.0px;overflow:hidden;text-align:right;">100</div><svg style="position:absolute;left:1013.0px;top:517.76px" width="13" height="13" viewBox="0 0 13 13">
<ellipse cx="2.3" cy="2.2" rx="2" ry="2.2" fill="#111"/><line x1="2.5" y1="4" x2="4.5" y2="9" stroke="#111" stroke-width="0.8"/>
<path d="M5.6 3.3 Q5.8 0.9 8.2 0.9 Q10.7 0.9 10.8 3.3 Z" fill="#111"/>
<path d="M6 3.6 H10.4 Q10.4 6.6 8.2 6.6 Q6 6.6 6 3.6 Z" fill="none" stroke="#111" stroke-width="0.9"/>
<path d="M3.8 12.8 Q4 8 8.2 7.8 Q12.6 8 12.8 12.8 Z" fill="#111"/>
<line x1="6" y1="10.2" x2="10.6" y2="10.2" stroke="#fff" stroke-width="0.6"/></svg><svg style="position:absolute;left:1034px;top:517.96px" width="13" height="13" viewBox="0 0 13 13">
<path d="M6 1.4 H2.2 Q1 1.4 1 2.6 V10.9 Q1 12.1 2.2 12.1 H10.1 Q11.3 12.1 11.3 10.9 V7.3" fill="none" stroke="#111" stroke-width="1.7"/>
<path d="M10.5 0.6 L12.5 2.6 L6.2 8.9 L3.6 9.6 L4.3 7 Z" fill="#111"/></svg><svg style="position:absolute;left:1056.5px;top:517.76px" width="11" height="13" viewBox="0 0 11 13">
<rect x="4.5" y="0" width="1.8" height="2" rx="0.5" fill="#e8152d"/>
<rect x="0.2" y="1.6" width="10.4" height="1.5" rx="0.6" fill="#e8152d"/>
<path d="M1.3 3.7 H9.5 V11.4 Q9.5 12.9 8 12.9 H2.8 Q1.3 12.9 1.3 11.4 Z" fill="#e8152d"/>
<rect x="3.1" y="5" width="0.8" height="6.2" fill="#f5b4bb"/><rect x="5" y="5" width="0.8" height="6.2" fill="#f5b4bb"/><rect x="6.9" y="5" width="0.8" height="6.2" fill="#f5b4bb"/></svg><div style="position:absolute;left:206.2px;top:533.94px;width:1313px;height:1px;background:#ebebeb;"></div><div style="position:absolute;left:1337.5px;top:513.36px;width:2px;height:18.5px;background:#2898b0;"></div><div style="position:absolute;left:1358.5px;top:516.66px;white-space:pre;font-family:'Liberation Sans',sans-serif;font-size:10.9px;color:#6a6a6a;width:160.5px;overflow:hidden;"><b>Task Name :</b> Construction of embankment</div><div style="position:absolute;left:206px;top:540.94px;white-space:pre;font-family:'Liberation Sans',sans-serif;font-size:10.7px;color:#454545;width:49.5px;overflow:hidden;text-align:center;">V-E-7</div><svg style="position:absolute;left:315px;top:537.74px" width="15" height="19" viewBox="0 0 15 19">
<rect x="1" y="1.9" width="12.7" height="16" fill="none" stroke="#8a8a8a" stroke-width="1.5"/>
<path d="M3.9 1.9 V4 H10.8 V1.9 Z" fill="#fff" stroke="#8a8a8a" stroke-width="1.2"/>
<circle cx="7.35" cy="1.3" r="0.9" fill="#8a8a8a"/>
<path d="M3.3 15.5 L3.6 13 L9.9 6.7 L11.9 8.7 L5.6 15 Z M9 7.6 L11 9.6" fill="none" stroke="#8a8a8a" stroke-width="1.1"/></svg><div style="position:absolute;left:336.3px;top:540.94px;white-space:pre;font-family:'Liberation Sans',sans-serif;font-size:10.7px;color:#454545;color:#222;-webkit-text-stroke:0.12px #222;width:135.0px;overflow:hidden;">Construction of embankment</div><div style="position:absolute;left:471.3px;top:540.94px;white-space:pre;font-family:'Liberation Sans',sans-serif;font-size:10.7px;color:#454545;width:59.30000000000001px;overflow:hidden;text-align:center;">CUM</div><div style="position:absolute;left:530.6px;top:540.94px;white-space:pre;font-family:'Liberation Sans',sans-serif;font-size:10.7px;color:#454545;width:61.799999999999955px;overflow:hidden;text-align:right;">0</div><div style="position:absolute;left:599.4px;top:540.94px;white-space:pre;font-family:'Liberation Sans',sans-serif;font-size:10.7px;color:#454545;width:62.10000000000002px;overflow:hidden;text-align:right;">0</div><div style="position:absolute;left:668.5px;top:540.94px;white-space:pre;font-family:'Liberation Sans',sans-serif;font-size:10.7px;color:#454545;width:61.89999999999998px;overflow:hidden;text-align:right;">0</div><div style="position:absolute;left:737.4px;top:540.94px;white-space:pre;font-family:'Liberation Sans',sans-serif;font-size:10.7px;color:#454545;width:60.89999999999998px;overflow:hidden;text-align:right;">0</div><div style="position:absolute;left:805.3px;top:540.94px;white-space:pre;font-family:'Liberation Sans',sans-serif;font-size:10.7px;color:#454545;width:62.200000000000045px;overflow:hidden;text-align:right;">0</div><div style="position:absolute;left:874.5px;top:540.94px;white-space:pre;font-family:'Liberation Sans',sans-serif;font-size:10.7px;color:#454545;width:90.10000000000002px;overflow:hidden;text-align:right;">0</div><div style="position:absolute;left:971.6px;top:540.94px;white-space:pre;font-family:'Liberation Sans',sans-serif;font-size:10.7px;color:#454545;width:29.0px;overflow:hidden;text-align:right;">100</div><svg style="position:absolute;left:1013.0px;top:542.04px" width="13" height="13" viewBox="0 0 13 13">
<ellipse cx="2.3" cy="2.2" rx="2" ry="2.2" fill="#111"/><line x1="2.5" y1="4" x2="4.5" y2="9" stroke="#111" stroke-width="0.8"/>
<path d="M5.6 3.3 Q5.8 0.9 8.2 0.9 Q10.7 0.9 10.8 3.3 Z" fill="#111"/>
<path d="M6 3.6 H10.4 Q10.4 6.6 8.2 6.6 Q6 6.6 6 3.6 Z" fill="none" stroke="#111" stroke-width="0.9"/>
<path d="M3.8 12.8 Q4 8 8.2 7.8 Q12.6 8 12.8 12.8 Z" fill="#111"/>
<line x1="6" y1="10.2" x2="10.6" y2="10.2" stroke="#fff" stroke-width="0.6"/></svg><svg style="position:absolute;left:1034px;top:542.24px" width="13" height="13" viewBox="0 0 13 13">
<path d="M6 1.4 H2.2 Q1 1.4 1 2.6 V10.9 Q1 12.1 2.2 12.1 H10.1 Q11.3 12.1 11.3 10.9 V7.3" fill="none" stroke="#111" stroke-width="1.7"/>
<path d="M10.5 0.6 L12.5 2.6 L6.2 8.9 L3.6 9.6 L4.3 7 Z" fill="#111"/></svg><svg style="position:absolute;left:1056.5px;top:542.04px" width="11" height="13" viewBox="0 0 11 13">
<rect x="4.5" y="0" width="1.8" height="2" rx="0.5" fill="#e8152d"/>
<rect x="0.2" y="1.6" width="10.4" height="1.5" rx="0.6" fill="#e8152d"/>
<path d="M1.3 3.7 H9.5 V11.4 Q9.5 12.9 8 12.9 H2.8 Q1.3 12.9 1.3 11.4 Z" fill="#e8152d"/>
<rect x="3.1" y="5" width="0.8" height="6.2" fill="#f5b4bb"/><rect x="5" y="5" width="0.8" height="6.2" fill="#f5b4bb"/><rect x="6.9" y="5" width="0.8" height="6.2" fill="#f5b4bb"/></svg><div style="position:absolute;left:206.2px;top:558.22px;width:1313px;height:1px;background:#ebebeb;"></div><div style="position:absolute;left:1337.5px;top:537.64px;width:2px;height:18.5px;background:#2898b0;"></div><div style="position:absolute;left:1358.5px;top:540.94px;white-space:pre;font-family:'Liberation Sans',sans-serif;font-size:10.9px;color:#6a6a6a;width:160.5px;overflow:hidden;"><b>Task Name :</b> Construction of embankment</div><div style="position:absolute;left:206px;top:565.22px;white-space:pre;font-family:'Liberation Sans',sans-serif;font-size:10.7px;color:#454545;width:49.5px;overflow:hidden;text-align:center;">V-E-8</div><svg style="position:absolute;left:315px;top:562.02px" width="15" height="19" viewBox="0 0 15 19">
<rect x="1" y="1.9" width="12.7" height="16" fill="none" stroke="#8a8a8a" stroke-width="1.5"/>
<path d="M3.9 1.9 V4 H10.8 V1.9 Z" fill="#fff" stroke="#8a8a8a" stroke-width="1.2"/>
<circle cx="7.35" cy="1.3" r="0.9" fill="#8a8a8a"/>
<path d="M3.3 15.5 L3.6 13 L9.9 6.7 L11.9 8.7 L5.6 15 Z M9 7.6 L11 9.6" fill="none" stroke="#8a8a8a" stroke-width="1.1"/></svg><div style="position:absolute;left:336.3px;top:565.22px;white-space:pre;font-family:'Liberation Sans',sans-serif;font-size:10.7px;color:#454545;color:#222;-webkit-text-stroke:0.12px #222;width:135.0px;overflow:hidden;">Construction of embankment</div><div style="position:absolute;left:471.3px;top:565.22px;white-space:pre;font-family:'Liberation Sans',sans-serif;font-size:10.7px;color:#454545;width:59.30000000000001px;overflow:hidden;text-align:center;">CUM</div><div style="position:absolute;left:530.6px;top:565.22px;white-space:pre;font-family:'Liberation Sans',sans-serif;font-size:10.7px;color:#454545;width:61.799999999999955px;overflow:hidden;text-align:right;">0</div><div style="position:absolute;left:599.4px;top:565.22px;white-space:pre;font-family:'Liberation Sans',sans-serif;font-size:10.7px;color:#454545;width:62.10000000000002px;overflow:hidden;text-align:right;">0</div><div style="position:absolute;left:668.5px;top:565.22px;white-space:pre;font-family:'Liberation Sans',sans-serif;font-size:10.7px;color:#454545;width:61.89999999999998px;overflow:hidden;text-align:right;">0</div><div style="position:absolute;left:737.4px;top:565.22px;white-space:pre;font-family:'Liberation Sans',sans-serif;font-size:10.7px;color:#454545;width:60.89999999999998px;overflow:hidden;text-align:right;">0</div><div style="position:absolute;left:805.3px;top:565.22px;white-space:pre;font-family:'Liberation Sans',sans-serif;font-size:10.7px;color:#454545;width:62.200000000000045px;overflow:hidden;text-align:right;">0</div><div style="position:absolute;left:874.5px;top:565.22px;white-space:pre;font-family:'Liberation Sans',sans-serif;font-size:10.7px;color:#454545;width:90.10000000000002px;overflow:hidden;text-align:right;">0</div><div style="position:absolute;left:971.6px;top:565.22px;white-space:pre;font-family:'Liberation Sans',sans-serif;font-size:10.7px;color:#454545;width:29.0px;overflow:hidden;text-align:right;">100</div><svg style="position:absolute;left:1013.0px;top:566.32px" width="13" height="13" viewBox="0 0 13 13">
<ellipse cx="2.3" cy="2.2" rx="2" ry="2.2" fill="#111"/><line x1="2.5" y1="4" x2="4.5" y2="9" stroke="#111" stroke-width="0.8"/>
<path d="M5.6 3.3 Q5.8 0.9 8.2 0.9 Q10.7 0.9 10.8 3.3 Z" fill="#111"/>
<path d="M6 3.6 H10.4 Q10.4 6.6 8.2 6.6 Q6 6.6 6 3.6 Z" fill="none" stroke="#111" stroke-width="0.9"/>
<path d="M3.8 12.8 Q4 8 8.2 7.8 Q12.6 8 12.8 12.8 Z" fill="#111"/>
<line x1="6" y1="10.2" x2="10.6" y2="10.2" stroke="#fff" stroke-width="0.6"/></svg><svg style="position:absolute;left:1034px;top:566.52px" width="13" height="13" viewBox="0 0 13 13">
<path d="M6 1.4 H2.2 Q1 1.4 1 2.6 V10.9 Q1 12.1 2.2 12.1 H10.1 Q11.3 12.1 11.3 10.9 V7.3" fill="none" stroke="#111" stroke-width="1.7"/>
<path d="M10.5 0.6 L12.5 2.6 L6.2 8.9 L3.6 9.6 L4.3 7 Z" fill="#111"/></svg><svg style="position:absolute;left:1056.5px;top:566.32px" width="11" height="13" viewBox="0 0 11 13">
<rect x="4.5" y="0" width="1.8" height="2" rx="0.5" fill="#e8152d"/>
<rect x="0.2" y="1.6" width="10.4" height="1.5" rx="0.6" fill="#e8152d"/>
<path d="M1.3 3.7 H9.5 V11.4 Q9.5 12.9 8 12.9 H2.8 Q1.3 12.9 1.3 11.4 Z" fill="#e8152d"/>
<rect x="3.1" y="5" width="0.8" height="6.2" fill="#f5b4bb"/><rect x="5" y="5" width="0.8" height="6.2" fill="#f5b4bb"/><rect x="6.9" y="5" width="0.8" height="6.2" fill="#f5b4bb"/></svg><div style="position:absolute;left:206.2px;top:582.5px;width:1313px;height:1px;background:#ebebeb;"></div><div style="position:absolute;left:1337.5px;top:561.92px;width:2px;height:18.5px;background:#2898b0;"></div><div style="position:absolute;left:1358.5px;top:565.22px;white-space:pre;font-family:'Liberation Sans',sans-serif;font-size:10.9px;color:#6a6a6a;width:160.5px;overflow:hidden;"><b>Task Name :</b> Construction of embankment</div><div style="position:absolute;left:206px;top:589.5px;white-space:pre;font-family:'Liberation Sans',sans-serif;font-size:10.7px;color:#454545;width:49.5px;overflow:hidden;text-align:center;">V-E-9</div><svg style="position:absolute;left:315px;top:586.3px" width="15" height="19" viewBox="0 0 15 19">
<rect x="1" y="1.9" width="12.7" height="16" fill="none" stroke="#8a8a8a" stroke-width="1.5"/>
<path d="M3.9 1.9 V4 H10.8 V1.9 Z" fill="#fff" stroke="#8a8a8a" stroke-width="1.2"/>
<circle cx="7.35" cy="1.3" r="0.9" fill="#8a8a8a"/>
<path d="M3.3 15.5 L3.6 13 L9.9 6.7 L11.9 8.7 L5.6 15 Z M9 7.6 L11 9.6" fill="none" stroke="#8a8a8a" stroke-width="1.1"/></svg><div style="position:absolute;left:336.3px;top:589.5px;white-space:pre;font-family:'Liberation Sans',sans-serif;font-size:10.7px;color:#454545;color:#222;-webkit-text-stroke:0.12px #222;width:135.0px;overflow:hidden;">Extra lead of every one km.</div><div style="position:absolute;left:471.3px;top:589.5px;white-space:pre;font-family:'Liberation Sans',sans-serif;font-size:10.7px;color:#454545;width:59.30000000000001px;overflow:hidden;text-align:center;">CUM</div><div style="position:absolute;left:530.6px;top:589.5px;white-space:pre;font-family:'Liberation Sans',sans-serif;font-size:10.7px;color:#454545;width:61.799999999999955px;overflow:hidden;text-align:right;">0</div><div style="position:absolute;left:599.4px;top:589.5px;white-space:pre;font-family:'Liberation Sans',sans-serif;font-size:10.7px;color:#454545;width:62.10000000000002px;overflow:hidden;text-align:right;">0</div><div style="position:absolute;left:668.5px;top:589.5px;white-space:pre;font-family:'Liberation Sans',sans-serif;font-size:10.7px;color:#454545;width:61.89999999999998px;overflow:hidden;text-align:right;">0</div><div style="position:absolute;left:737.4px;top:589.5px;white-space:pre;font-family:'Liberation Sans',sans-serif;font-size:10.7px;color:#454545;width:60.89999999999998px;overflow:hidden;text-align:right;">0</div><div style="position:absolute;left:805.3px;top:589.5px;white-space:pre;font-family:'Liberation Sans',sans-serif;font-size:10.7px;color:#454545;width:62.200000000000045px;overflow:hidden;text-align:right;">0</div><div style="position:absolute;left:874.5px;top:589.5px;white-space:pre;font-family:'Liberation Sans',sans-serif;font-size:10.7px;color:#454545;width:90.10000000000002px;overflow:hidden;text-align:right;">0</div><div style="position:absolute;left:971.6px;top:589.5px;white-space:pre;font-family:'Liberation Sans',sans-serif;font-size:10.7px;color:#454545;width:29.0px;overflow:hidden;text-align:right;">100</div><svg style="position:absolute;left:1013.0px;top:590.6px" width="13" height="13" viewBox="0 0 13 13">
<ellipse cx="2.3" cy="2.2" rx="2" ry="2.2" fill="#111"/><line x1="2.5" y1="4" x2="4.5" y2="9" stroke="#111" stroke-width="0.8"/>
<path d="M5.6 3.3 Q5.8 0.9 8.2 0.9 Q10.7 0.9 10.8 3.3 Z" fill="#111"/>
<path d="M6 3.6 H10.4 Q10.4 6.6 8.2 6.6 Q6 6.6 6 3.6 Z" fill="none" stroke="#111" stroke-width="0.9"/>
<path d="M3.8 12.8 Q4 8 8.2 7.8 Q12.6 8 12.8 12.8 Z" fill="#111"/>
<line x1="6" y1="10.2" x2="10.6" y2="10.2" stroke="#fff" stroke-width="0.6"/></svg><svg style="position:absolute;left:1034px;top:590.8px" width="13" height="13" viewBox="0 0 13 13">
<path d="M6 1.4 H2.2 Q1 1.4 1 2.6 V10.9 Q1 12.1 2.2 12.1 H10.1 Q11.3 12.1 11.3 10.9 V7.3" fill="none" stroke="#111" stroke-width="1.7"/>
<path d="M10.5 0.6 L12.5 2.6 L6.2 8.9 L3.6 9.6 L4.3 7 Z" fill="#111"/></svg><svg style="position:absolute;left:1056.5px;top:590.6px" width="11" height="13" viewBox="0 0 11 13">
<rect x="4.5" y="0" width="1.8" height="2" rx="0.5" fill="#e8152d"/>
<rect x="0.2" y="1.6" width="10.4" height="1.5" rx="0.6" fill="#e8152d"/>
<path d="M1.3 3.7 H9.5 V11.4 Q9.5 12.9 8 12.9 H2.8 Q1.3 12.9 1.3 11.4 Z" fill="#e8152d"/>
<rect x="3.1" y="5" width="0.8" height="6.2" fill="#f5b4bb"/><rect x="5" y="5" width="0.8" height="6.2" fill="#f5b4bb"/><rect x="6.9" y="5" width="0.8" height="6.2" fill="#f5b4bb"/></svg><div style="position:absolute;left:206.2px;top:606.78px;width:1313px;height:1px;background:#ebebeb;"></div><div style="position:absolute;left:1337.5px;top:586.2px;width:2px;height:18.5px;background:#2898b0;"></div><div style="position:absolute;left:1358.5px;top:589.5px;white-space:pre;font-family:'Liberation Sans',sans-serif;font-size:10.9px;color:#6a6a6a;width:160.5px;overflow:hidden;"><b>Task Name :</b> Extra lead of every one km</div><div style="position:absolute;left:206px;top:613.78px;white-space:pre;font-family:'Liberation Sans',sans-serif;font-size:10.7px;color:#454545;width:49.5px;overflow:hidden;text-align:center;">V-E-10</div><svg style="position:absolute;left:315px;top:610.58px" width="15" height="19" viewBox="0 0 15 19">
<rect x="1" y="1.9" width="12.7" height="16" fill="none" stroke="#8a8a8a" stroke-width="1.5"/>
<path d="M3.9 1.9 V4 H10.8 V1.9 Z" fill="#fff" stroke="#8a8a8a" stroke-width="1.2"/>
<circle cx="7.35" cy="1.3" r="0.9" fill="#8a8a8a"/>
<path d="M3.3 15.5 L3.6 13 L9.9 6.7 L11.9 8.7 L5.6 15 Z M9 7.6 L11 9.6" fill="none" stroke="#8a8a8a" stroke-width="1.1"/></svg><div style="position:absolute;left:336.3px;top:613.78px;white-space:pre;font-family:'Liberation Sans',sans-serif;font-size:10.7px;color:#454545;color:#222;-webkit-text-stroke:0.12px #222;width:135.0px;overflow:hidden;">Excavation for Structure foundation</div><div style="position:absolute;left:471.3px;top:613.78px;white-space:pre;font-family:'Liberation Sans',sans-serif;font-size:10.7px;color:#454545;width:59.30000000000001px;overflow:hidden;text-align:center;">CUM</div><div style="position:absolute;left:530.6px;top:613.78px;white-space:pre;font-family:'Liberation Sans',sans-serif;font-size:10.7px;color:#454545;width:61.799999999999955px;overflow:hidden;text-align:right;">0</div><div style="position:absolute;left:599.4px;top:613.78px;white-space:pre;font-family:'Liberation Sans',sans-serif;font-size:10.7px;color:#454545;width:62.10000000000002px;overflow:hidden;text-align:right;">0</div><div style="position:absolute;left:668.5px;top:613.78px;white-space:pre;font-family:'Liberation Sans',sans-serif;font-size:10.7px;color:#454545;width:61.89999999999998px;overflow:hidden;text-align:right;">0</div><div style="position:absolute;left:737.4px;top:613.78px;white-space:pre;font-family:'Liberation Sans',sans-serif;font-size:10.7px;color:#454545;width:60.89999999999998px;overflow:hidden;text-align:right;">0</div><div style="position:absolute;left:805.3px;top:613.78px;white-space:pre;font-family:'Liberation Sans',sans-serif;font-size:10.7px;color:#454545;width:62.200000000000045px;overflow:hidden;text-align:right;">0</div><div style="position:absolute;left:874.5px;top:613.78px;white-space:pre;font-family:'Liberation Sans',sans-serif;font-size:10.7px;color:#454545;width:90.10000000000002px;overflow:hidden;text-align:right;">0</div><div style="position:absolute;left:971.6px;top:613.78px;white-space:pre;font-family:'Liberation Sans',sans-serif;font-size:10.7px;color:#454545;width:29.0px;overflow:hidden;text-align:right;">100</div><svg style="position:absolute;left:1013.0px;top:614.88px" width="13" height="13" viewBox="0 0 13 13">
<ellipse cx="2.3" cy="2.2" rx="2" ry="2.2" fill="#111"/><line x1="2.5" y1="4" x2="4.5" y2="9" stroke="#111" stroke-width="0.8"/>
<path d="M5.6 3.3 Q5.8 0.9 8.2 0.9 Q10.7 0.9 10.8 3.3 Z" fill="#111"/>
<path d="M6 3.6 H10.4 Q10.4 6.6 8.2 6.6 Q6 6.6 6 3.6 Z" fill="none" stroke="#111" stroke-width="0.9"/>
<path d="M3.8 12.8 Q4 8 8.2 7.8 Q12.6 8 12.8 12.8 Z" fill="#111"/>
<line x1="6" y1="10.2" x2="10.6" y2="10.2" stroke="#fff" stroke-width="0.6"/></svg><svg style="position:absolute;left:1034px;top:615.08px" width="13" height="13" viewBox="0 0 13 13">
<path d="M6 1.4 H2.2 Q1 1.4 1 2.6 V10.9 Q1 12.1 2.2 12.1 H10.1 Q11.3 12.1 11.3 10.9 V7.3" fill="none" stroke="#111" stroke-width="1.7"/>
<path d="M10.5 0.6 L12.5 2.6 L6.2 8.9 L3.6 9.6 L4.3 7 Z" fill="#111"/></svg><svg style="position:absolute;left:1056.5px;top:614.88px" width="11" height="13" viewBox="0 0 11 13">
<rect x="4.5" y="0" width="1.8" height="2" rx="0.5" fill="#e8152d"/>
<rect x="0.2" y="1.6" width="10.4" height="1.5" rx="0.6" fill="#e8152d"/>
<path d="M1.3 3.7 H9.5 V11.4 Q9.5 12.9 8 12.9 H2.8 Q1.3 12.9 1.3 11.4 Z" fill="#e8152d"/>
<rect x="3.1" y="5" width="0.8" height="6.2" fill="#f5b4bb"/><rect x="5" y="5" width="0.8" height="6.2" fill="#f5b4bb"/><rect x="6.9" y="5" width="0.8" height="6.2" fill="#f5b4bb"/></svg><div style="position:absolute;left:206.2px;top:631.06px;width:1313px;height:1px;background:#ebebeb;"></div><div style="position:absolute;left:1337.5px;top:610.48px;width:2px;height:18.5px;background:#2898b0;"></div><div style="position:absolute;left:1358.5px;top:613.78px;white-space:pre;font-family:'Liberation Sans',sans-serif;font-size:10.9px;color:#6a6a6a;width:160.5px;overflow:hidden;"><b>Task Name :</b> Excavation for Structure</div></div><div style="position:absolute;left:206.2px;top:97px;width:1329.8px;height:1px;background:#d2d2d2;"></div><div style="position:absolute;left:1519px;top:97.4px;width:17px;height:531.6px;background:#f1f1f1;"></div><div style="position:absolute;left:1521px;top:115px;width:12px;height:91px;background:#c1c1c1;"></div><svg style="position:absolute;left:1522.5px;top:104.5px" width="8" height="5"><path d="M0 4.5 L4 0.5 L8 4.5 Z" fill="#a3a3a3"/></svg><svg style="position:absolute;left:1522.5px;top:618.5px" width="8" height="5"><path d="M0 0.5 L4 4.5 L8 0.5 Z" fill="#505050"/></svg><div style="position:absolute;left:206.2px;top:628.7px;width:1329.8px;height:1.5px;background:#cdced3;"></div><div style="position:absolute;left:206.2px;top:630.2px;width:1329.8px;height:9.3px;background:#fff;"></div><div style="position:absolute;left:0px;top:638.9px;width:1536px;height:43.1px;background:#fff;border-top:1px solid #e0e0e0;box-sizing:border-box;"></div><svg style="position:absolute;left:3.5px;top:654px" width="13" height="16" viewBox="0 0 13 16">
<path d="M0.6 0.6 H8.5 L12.4 4.5 V15.4 H0.6 Z" fill="#fff" stroke="#9a9a9a" stroke-width="1"/><path d="M8.5 0.6 V4.5 H12.4" fill="none" stroke="#9a9a9a" stroke-width="1"/>
<rect x="2.8" y="7" width="7.4" height="5.8" fill="#1a5fb4"/><rect x="2.8" y="7" width="7.4" height="2.5" fill="#4aa3f0"/></svg><div style="position:absolute;left:30.5px;top:657.3px;white-space:pre;font-family:'Liberation Sans',sans-serif;font-size:12px;color:#444;">D.jpg</div><svg style="position:absolute;left:177.5px;top:660.2px" width="12" height="7" viewBox="0 0 12 7"><path d="M1 6.2 L6 1.2 L11 6.2" fill="none" stroke="#808080" stroke-width="1.6"/></svg><div style="position:absolute;left:206px;top:646px;width:1px;height:35px;background:#d6d6d6;"></div><div style="position:absolute;left:1425.7px;top:647.8px;width:74.7px;height:29.4px;box-sizing:border-box;border:1px solid #dadce0;border-radius:4px;background:#fff;"></div><svg style="position:absolute;left:1513.5px;top:657.5px" width="10" height="10" viewBox="0 0 10 10"><path d="M1 1 L9 9 M9 1 L1 9" stroke="#555" stroke-width="1.5"/></svg><div style="position:absolute;left:1412px;top:653.5px;width:78px;height:35px;box-sizing:border-box;border:1px solid #767676;background:#fff;box-shadow:2px 2px 2px rgba(0,0,0,0.35);"><div style="position:absolute;left:4.5px;top:0px;white-space:pre;font-family:'Liberation Sans',sans-serif;font-size:11.7px;line-height:15px;color:#333;">2020/May/25
Monday</div></div><div style="position:absolute;left:1239.5px;top:604.5px;white-space:pre;font-family:'Liberation Sans',sans-serif;font-size:19.5px;color:rgba(120,120,120,0.45);">Activate Windows</div><div style="position:absolute;left:1239.5px;top:629.5px;white-space:pre;font-family:'Liberation Sans',sans-serif;font-size:14.5px;color:rgba(120,120,120,0.45);">Go to Settings to activate Windows.</div>
</body></html>
